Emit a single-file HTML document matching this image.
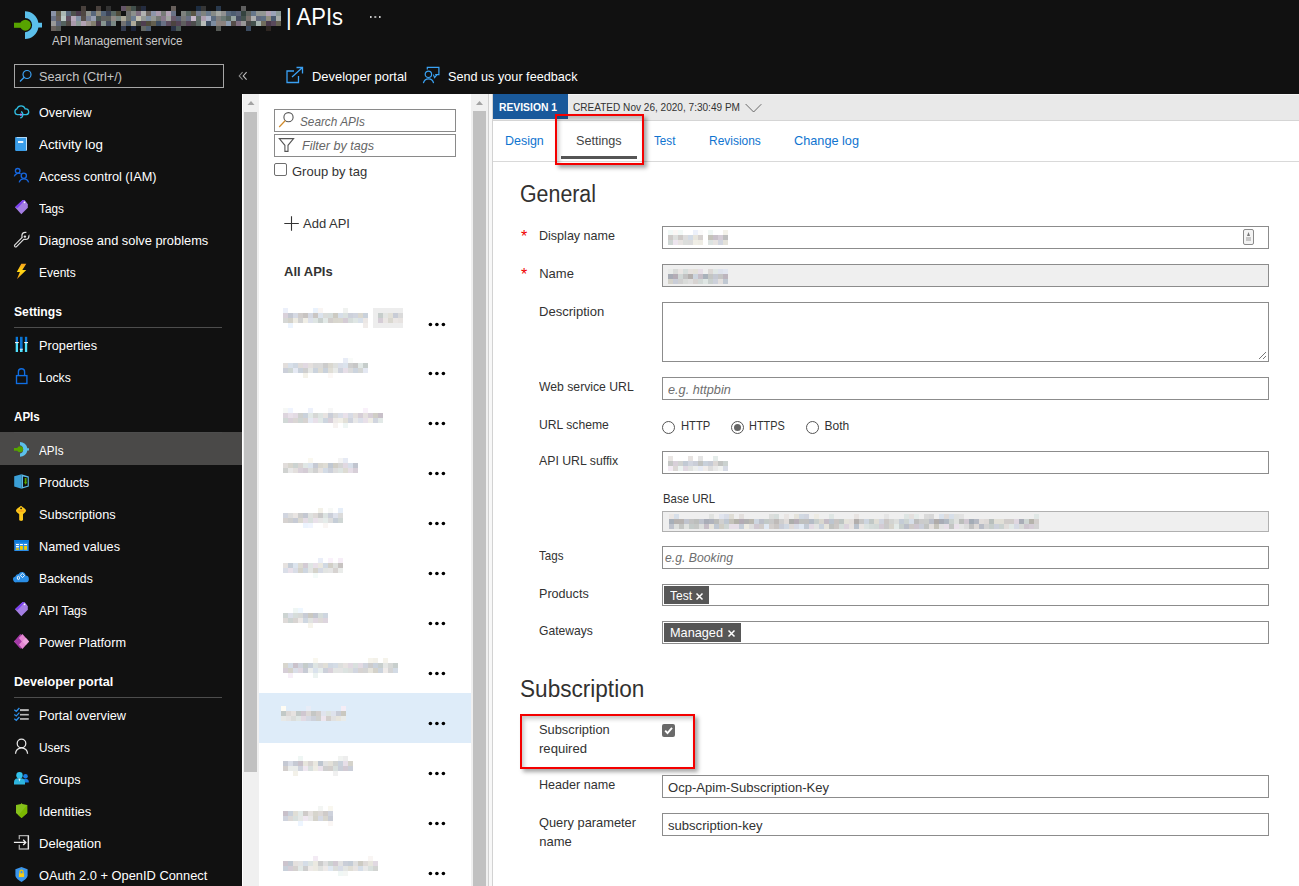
<!DOCTYPE html><html><head><meta charset="utf-8"><style>
html,body{margin:0;padding:0;}
body{width:1299px;height:886px;overflow:hidden;position:relative;background:#111111;font-family:"Liberation Sans", sans-serif;}
.t{position:absolute;white-space:nowrap;font-family:"Liberation Sans", sans-serif;}
svg{display:block;}
</style></head><body>
<svg style="position:absolute;left:10px;top:6px" width="40" height="40" viewBox="0 0 40 40">
<path d="M15 5.3 A13.7 13.7 0 0 1 28.4 16.7 H32 V21.6 H28.4 A13.7 13.7 0 0 1 15 33 V26.2 A7.1 7.1 0 0 0 15 11.9 Z" fill="#5bbfea"/>
<rect x="4" y="16.7" width="8" height="5.1" fill="#57a300"/>
<circle cx="15.4" cy="19.2" r="5.5" fill="#57a300"/>
</svg>
<svg style="position:absolute;left:51px;top:6px" width="230" height="25" viewBox="0 0 230 25"><rect x="30" y="0" width="5" height="5" fill="rgb(72, 64, 60)"/><rect x="45" y="0" width="5" height="5" fill="rgb(73, 65, 61)"/><rect x="55" y="0" width="5" height="5" fill="rgb(50, 50, 50)"/><rect x="70" y="0" width="5" height="5" fill="rgb(100, 84, 102)"/><rect x="75" y="0" width="5" height="5" fill="rgb(98, 94, 78)"/><rect x="80" y="0" width="5" height="5" fill="rgb(66, 80, 76)"/><rect x="85" y="0" width="5" height="5" fill="rgb(35, 35, 35)"/><rect x="90" y="0" width="5" height="5" fill="rgb(36, 44, 64)"/><rect x="120" y="0" width="5" height="5" fill="rgb(103, 95, 91)"/><rect x="145" y="0" width="5" height="5" fill="rgb(28, 44, 64)"/><rect x="150" y="0" width="5" height="5" fill="rgb(54, 54, 54)"/><rect x="165" y="0" width="5" height="5" fill="rgb(41, 57, 77)"/><rect x="190" y="0" width="5" height="5" fill="rgb(95, 95, 95)"/><rect x="0" y="5" width="5" height="5" fill="rgb(138, 146, 166)"/><rect x="5" y="5" width="5" height="5" fill="rgb(97, 93, 77)"/><rect x="10" y="5" width="5" height="5" fill="rgb(170, 184, 180)"/><rect x="15" y="5" width="5" height="5" fill="rgb(89, 105, 125)"/><rect x="20" y="5" width="5" height="5" fill="rgb(77, 81, 77)"/><rect x="25" y="5" width="5" height="5" fill="rgb(74, 58, 76)"/><rect x="30" y="5" width="5" height="5" fill="rgb(79, 71, 67)"/><rect x="35" y="5" width="5" height="5" fill="rgb(142, 146, 142)"/><rect x="40" y="5" width="5" height="5" fill="rgb(87, 103, 123)"/><rect x="45" y="5" width="5" height="5" fill="rgb(141, 137, 121)"/><rect x="50" y="5" width="5" height="5" fill="rgb(84, 100, 120)"/><rect x="55" y="5" width="5" height="5" fill="rgb(58, 66, 86)"/><rect x="60" y="5" width="5" height="5" fill="rgb(91, 105, 101)"/><rect x="65" y="5" width="5" height="5" fill="rgb(78, 74, 58)"/><rect x="75" y="5" width="5" height="5" fill="rgb(111, 111, 111)"/><rect x="80" y="5" width="5" height="5" fill="rgb(140, 144, 140)"/><rect x="85" y="5" width="5" height="5" fill="rgb(128, 112, 130)"/><rect x="90" y="5" width="5" height="5" fill="rgb(177, 177, 177)"/><rect x="95" y="5" width="5" height="5" fill="rgb(110, 102, 98)"/><rect x="100" y="5" width="5" height="5" fill="rgb(141, 149, 169)"/><rect x="105" y="5" width="5" height="5" fill="rgb(170, 154, 172)"/><rect x="110" y="5" width="5" height="5" fill="rgb(119, 123, 119)"/><rect x="115" y="5" width="5" height="5" fill="rgb(178, 162, 180)"/><rect x="120" y="5" width="5" height="5" fill="rgb(106, 114, 134)"/><rect x="130" y="5" width="5" height="5" fill="rgb(126, 130, 126)"/><rect x="135" y="5" width="5" height="5" fill="rgb(89, 103, 99)"/><rect x="140" y="5" width="5" height="5" fill="rgb(90, 86, 70)"/><rect x="145" y="5" width="5" height="5" fill="rgb(116, 124, 144)"/><rect x="150" y="5" width="5" height="5" fill="rgb(127, 131, 127)"/><rect x="155" y="5" width="5" height="5" fill="rgb(106, 122, 142)"/><rect x="160" y="5" width="5" height="5" fill="rgb(134, 138, 134)"/><rect x="165" y="5" width="5" height="5" fill="rgb(165, 169, 165)"/><rect x="170" y="5" width="5" height="5" fill="rgb(144, 144, 144)"/><rect x="175" y="5" width="5" height="5" fill="rgb(90, 106, 126)"/><rect x="180" y="5" width="5" height="5" fill="rgb(77, 93, 113)"/><rect x="185" y="5" width="5" height="5" fill="rgb(91, 99, 119)"/><rect x="190" y="5" width="5" height="5" fill="rgb(53, 67, 63)"/><rect x="195" y="5" width="5" height="5" fill="rgb(96, 100, 96)"/><rect x="200" y="5" width="5" height="5" fill="rgb(103, 119, 139)"/><rect x="205" y="5" width="5" height="5" fill="rgb(146, 150, 146)"/><rect x="210" y="5" width="5" height="5" fill="rgb(146, 150, 146)"/><rect x="215" y="5" width="5" height="5" fill="rgb(176, 160, 178)"/><rect x="220" y="5" width="5" height="5" fill="rgb(155, 163, 183)"/><rect x="225" y="5" width="5" height="5" fill="rgb(140, 154, 150)"/><rect x="0" y="10" width="5" height="5" fill="rgb(105, 113, 133)"/><rect x="5" y="10" width="5" height="5" fill="rgb(104, 96, 92)"/><rect x="10" y="10" width="5" height="5" fill="rgb(186, 200, 196)"/><rect x="15" y="10" width="5" height="5" fill="rgb(95, 79, 97)"/><rect x="20" y="10" width="5" height="5" fill="rgb(184, 168, 186)"/><rect x="25" y="10" width="5" height="5" fill="rgb(129, 145, 165)"/><rect x="30" y="10" width="5" height="5" fill="rgb(86, 78, 74)"/><rect x="35" y="10" width="5" height="5" fill="rgb(119, 127, 147)"/><rect x="40" y="10" width="5" height="5" fill="rgb(150, 158, 178)"/><rect x="45" y="10" width="5" height="5" fill="rgb(72, 86, 82)"/><rect x="50" y="10" width="5" height="5" fill="rgb(96, 96, 96)"/><rect x="55" y="10" width="5" height="5" fill="rgb(93, 97, 93)"/><rect x="60" y="10" width="5" height="5" fill="rgb(144, 136, 132)"/><rect x="65" y="10" width="5" height="5" fill="rgb(120, 134, 130)"/><rect x="70" y="10" width="5" height="5" fill="rgb(171, 167, 151)"/><rect x="75" y="10" width="5" height="5" fill="rgb(109, 113, 109)"/><rect x="80" y="10" width="5" height="5" fill="rgb(110, 126, 146)"/><rect x="85" y="10" width="5" height="5" fill="rgb(197, 193, 177)"/><rect x="90" y="10" width="5" height="5" fill="rgb(149, 153, 149)"/><rect x="95" y="10" width="5" height="5" fill="rgb(129, 145, 165)"/><rect x="100" y="10" width="5" height="5" fill="rgb(148, 152, 148)"/><rect x="105" y="10" width="5" height="5" fill="rgb(116, 120, 116)"/><rect x="110" y="10" width="5" height="5" fill="rgb(138, 122, 140)"/><rect x="115" y="10" width="5" height="5" fill="rgb(161, 165, 161)"/><rect x="120" y="10" width="5" height="5" fill="rgb(105, 89, 107)"/><rect x="125" y="10" width="5" height="5" fill="rgb(88, 96, 116)"/><rect x="130" y="10" width="5" height="5" fill="rgb(119, 119, 119)"/><rect x="135" y="10" width="5" height="5" fill="rgb(104, 112, 132)"/><rect x="140" y="10" width="5" height="5" fill="rgb(197, 181, 199)"/><rect x="145" y="10" width="5" height="5" fill="rgb(95, 109, 105)"/><rect x="150" y="10" width="5" height="5" fill="rgb(175, 159, 177)"/><rect x="155" y="10" width="5" height="5" fill="rgb(172, 180, 200)"/><rect x="160" y="10" width="5" height="5" fill="rgb(92, 108, 128)"/><rect x="165" y="10" width="5" height="5" fill="rgb(128, 128, 128)"/><rect x="170" y="10" width="5" height="5" fill="rgb(106, 120, 116)"/><rect x="175" y="10" width="5" height="5" fill="rgb(85, 99, 95)"/><rect x="180" y="10" width="5" height="5" fill="rgb(151, 165, 161)"/><rect x="185" y="10" width="5" height="5" fill="rgb(68, 76, 96)"/><rect x="190" y="10" width="5" height="5" fill="rgb(68, 82, 78)"/><rect x="195" y="10" width="5" height="5" fill="rgb(118, 110, 106)"/><rect x="200" y="10" width="5" height="5" fill="rgb(175, 175, 175)"/><rect x="205" y="10" width="5" height="5" fill="rgb(97, 105, 125)"/><rect x="210" y="10" width="5" height="5" fill="rgb(95, 111, 131)"/><rect x="215" y="10" width="5" height="5" fill="rgb(147, 143, 127)"/><rect x="220" y="10" width="5" height="5" fill="rgb(75, 91, 111)"/><rect x="225" y="10" width="5" height="5" fill="rgb(169, 173, 169)"/><rect x="0" y="15" width="5" height="5" fill="rgb(153, 153, 153)"/><rect x="5" y="15" width="5" height="5" fill="rgb(94, 102, 122)"/><rect x="10" y="15" width="5" height="5" fill="rgb(84, 98, 94)"/><rect x="15" y="15" width="5" height="5" fill="rgb(81, 73, 69)"/><rect x="20" y="15" width="5" height="5" fill="rgb(169, 153, 171)"/><rect x="25" y="15" width="5" height="5" fill="rgb(140, 154, 150)"/><rect x="30" y="15" width="5" height="5" fill="rgb(177, 161, 179)"/><rect x="35" y="15" width="5" height="5" fill="rgb(155, 147, 143)"/><rect x="40" y="15" width="5" height="5" fill="rgb(131, 127, 111)"/><rect x="45" y="15" width="5" height="5" fill="rgb(70, 54, 72)"/><rect x="50" y="15" width="5" height="5" fill="rgb(134, 148, 144)"/><rect x="55" y="15" width="5" height="5" fill="rgb(66, 74, 94)"/><rect x="60" y="15" width="5" height="5" fill="rgb(122, 136, 132)"/><rect x="70" y="15" width="5" height="5" fill="rgb(114, 114, 114)"/><rect x="75" y="15" width="5" height="5" fill="rgb(73, 89, 109)"/><rect x="80" y="15" width="5" height="5" fill="rgb(173, 169, 153)"/><rect x="85" y="15" width="5" height="5" fill="rgb(67, 71, 67)"/><rect x="90" y="15" width="5" height="5" fill="rgb(78, 62, 80)"/><rect x="95" y="15" width="5" height="5" fill="rgb(78, 74, 58)"/><rect x="100" y="15" width="5" height="5" fill="rgb(100, 96, 80)"/><rect x="105" y="15" width="5" height="5" fill="rgb(61, 77, 97)"/><rect x="110" y="15" width="5" height="5" fill="rgb(104, 112, 132)"/><rect x="115" y="15" width="5" height="5" fill="rgb(93, 77, 95)"/><rect x="120" y="15" width="5" height="5" fill="rgb(76, 68, 64)"/><rect x="125" y="15" width="5" height="5" fill="rgb(83, 67, 85)"/><rect x="130" y="15" width="5" height="5" fill="rgb(95, 95, 95)"/><rect x="135" y="15" width="5" height="5" fill="rgb(85, 69, 87)"/><rect x="140" y="15" width="5" height="5" fill="rgb(77, 77, 77)"/><rect x="145" y="15" width="5" height="5" fill="rgb(92, 106, 102)"/><rect x="150" y="15" width="5" height="5" fill="rgb(184, 188, 184)"/><rect x="155" y="15" width="5" height="5" fill="rgb(61, 77, 97)"/><rect x="160" y="15" width="5" height="5" fill="rgb(124, 140, 160)"/><rect x="165" y="15" width="5" height="5" fill="rgb(139, 131, 127)"/><rect x="170" y="15" width="5" height="5" fill="rgb(138, 130, 126)"/><rect x="175" y="15" width="5" height="5" fill="rgb(140, 156, 176)"/><rect x="180" y="15" width="5" height="5" fill="rgb(85, 77, 73)"/><rect x="185" y="15" width="5" height="5" fill="rgb(128, 112, 130)"/><rect x="190" y="15" width="5" height="5" fill="rgb(151, 151, 151)"/><rect x="195" y="15" width="5" height="5" fill="rgb(70, 70, 70)"/><rect x="200" y="15" width="5" height="5" fill="rgb(67, 81, 77)"/><rect x="205" y="15" width="5" height="5" fill="rgb(164, 178, 174)"/><rect x="210" y="15" width="5" height="5" fill="rgb(113, 109, 93)"/><rect x="215" y="15" width="5" height="5" fill="rgb(73, 57, 75)"/><rect x="220" y="15" width="5" height="5" fill="rgb(89, 73, 91)"/><rect x="225" y="15" width="5" height="5" fill="rgb(100, 96, 80)"/><rect x="0" y="20" width="5" height="5" fill="rgb(105, 97, 93)"/><rect x="5" y="20" width="5" height="5" fill="rgb(87, 91, 87)"/><rect x="70" y="20" width="5" height="5" fill="rgb(50, 58, 78)"/><rect x="80" y="20" width="5" height="5" fill="rgb(27, 35, 55)"/><rect x="90" y="20" width="5" height="5" fill="rgb(100, 104, 100)"/><rect x="95" y="20" width="5" height="5" fill="rgb(79, 95, 115)"/><rect x="120" y="20" width="5" height="5" fill="rgb(42, 50, 70)"/><rect x="125" y="20" width="5" height="5" fill="rgb(76, 90, 86)"/><rect x="165" y="20" width="5" height="5" fill="rgb(86, 90, 86)"/><rect x="195" y="20" width="5" height="5" fill="rgb(60, 76, 96)"/><rect x="215" y="20" width="5" height="5" fill="rgb(46, 38, 34)"/></svg>
<div class="t" style="left:286px;top:1px;font-size:24.5px;line-height:31px;color:#ffffff;font-weight:400;font-style:normal;transform:scaleX(0.8968);transform-origin:0 0;">| APIs</div>
<svg style="position:absolute;left:368px;top:14px" width="14" height="6" viewBox="0 0 14 6"><g fill="#cfcfcf"><rect x="2" y="2" width="1.6" height="2"/><rect x="6.3" y="2" width="2" height="2" fill="#a8a8a8"/><rect x="11" y="2" width="1.6" height="2"/></g></svg>
<div class="t" style="left:52px;top:34px;font-size:12px;line-height:15px;color:#c8c8c8;font-weight:400;font-style:normal;transform:scaleX(0.9734);transform-origin:0 0;">API Management service</div>
<div style="position:absolute;left:14px;top:64px;width:208px;height:22px;border:1px solid #a6a6a6;"></div>
<svg style="position:absolute;left:18px;top:68px" width="16" height="16" viewBox="0 0 16 16"><circle cx="9" cy="6.5" r="4" fill="none" stroke="#3aa0f3" stroke-width="1.2"/><path d="M6.2 9.3 L2 13.5" stroke="#3aa0f3" stroke-width="1.3"/></svg>
<div class="t" style="left:39px;top:69px;font-size:13px;line-height:16px;color:#c4c4c4;font-weight:400;font-style:normal;transform:scaleX(0.9777);transform-origin:0 0;">Search (Ctrl+/)</div>
<svg style="position:absolute;left:236px;top:68px" width="14" height="16" viewBox="0 0 14 16"><path d="M6.6 4.1 L3.2 7.9 L6.6 11.7" fill="none" stroke="#8a8a8a" stroke-width="1.1"/><path d="M10.6 4.1 L7.2 7.9 L10.6 11.7" fill="none" stroke="#c0c0c0" stroke-width="1.1"/></svg>
<svg style="position:absolute;left:284px;top:64px" width="22" height="22" viewBox="0 0 22 22"><path d="M10 7 H3 V18.5 H14.5 V12" fill="none" stroke="#3aa0f3" stroke-width="1.3"/><path d="M8 13 L18.5 3.5 M12.5 3.5 H18.5 V9.5" fill="none" stroke="#3aa0f3" stroke-width="1.3"/></svg>
<div class="t" style="left:311.5px;top:69px;font-size:13px;line-height:16px;color:#ffffff;font-weight:400;font-style:normal;transform:scaleX(0.9959);transform-origin:0 0;">Developer portal</div>
<svg style="position:absolute;left:420px;top:64px" width="22" height="22" viewBox="0 0 22 22"><g fill="none" stroke="#3aa3f5" stroke-width="1.2"><circle cx="8.4" cy="10.3" r="3.2"/><path d="M3.4 19.2 A5.2 5.4 0 0 1 13.6 19.2"/><path d="M7.3 5.6 V3.4 H18.9 V10.6 H15.2"/><path d="M13.4 10.6 L14.6 13.6 L16.8 10.9"/></g></svg>
<div class="t" style="left:447.5px;top:69px;font-size:13px;line-height:16px;color:#ffffff;font-weight:400;font-style:normal;transform:scaleX(0.9738);transform-origin:0 0;">Send us your feedback</div>
<div style="position:absolute;left:0px;top:432px;width:242px;height:33px;background:#4a4948;"></div>
<div class="t" style="left:14px;top:304px;font-size:13px;line-height:16px;color:#ffffff;font-weight:700;font-style:normal;transform:scaleX(0.9357);transform-origin:0 0;">Settings</div>
<div style="position:absolute;left:14px;top:327px;width:208px;height:1px;background:#4d4d4d;"></div>
<div class="t" style="left:14px;top:409px;font-size:13px;line-height:16px;color:#ffffff;font-weight:700;font-style:normal;transform:scaleX(0.8925);transform-origin:0 0;">APIs</div>
<div style="position:absolute;left:14px;top:432px;width:208px;height:1px;background:#4d4d4d;"></div>
<div class="t" style="left:14px;top:674px;font-size:13px;line-height:16px;color:#ffffff;font-weight:700;font-style:normal;transform:scaleX(0.9679);transform-origin:0 0;">Developer portal</div>
<div style="position:absolute;left:14px;top:697px;width:208px;height:1px;background:#4d4d4d;"></div>
<div class="t" style="left:39px;top:105px;font-size:13px;line-height:16px;color:#ffffff;font-weight:400;font-style:normal;transform:scaleX(0.9725);transform-origin:0 0;">Overview</div>
<div class="t" style="left:39px;top:137px;font-size:13px;line-height:16px;color:#ffffff;font-weight:400;font-style:normal;transform:scaleX(1.0283);transform-origin:0 0;">Activity log</div>
<div class="t" style="left:39px;top:169px;font-size:13px;line-height:16px;color:#ffffff;font-weight:400;font-style:normal;transform:scaleX(0.9798);transform-origin:0 0;">Access control (IAM)</div>
<div class="t" style="left:39px;top:201px;font-size:13px;line-height:16px;color:#ffffff;font-weight:400;font-style:normal;transform:scaleX(0.9065);transform-origin:0 0;">Tags</div>
<div class="t" style="left:39px;top:233px;font-size:13px;line-height:16px;color:#ffffff;font-weight:400;font-style:normal;transform:scaleX(0.9884);transform-origin:0 0;">Diagnose and solve problems</div>
<div class="t" style="left:39px;top:265px;font-size:13px;line-height:16px;color:#ffffff;font-weight:400;font-style:normal;transform:scaleX(0.9233);transform-origin:0 0;">Events</div>
<div class="t" style="left:39px;top:338px;font-size:13px;line-height:16px;color:#ffffff;font-weight:400;font-style:normal;transform:scaleX(0.9789);transform-origin:0 0;">Properties</div>
<div class="t" style="left:39px;top:370px;font-size:13px;line-height:16px;color:#ffffff;font-weight:400;font-style:normal;transform:scaleX(0.9362);transform-origin:0 0;">Locks</div>
<div class="t" style="left:39px;top:443px;font-size:13px;line-height:16px;color:#ffffff;font-weight:400;font-style:normal;transform:scaleX(0.8956);transform-origin:0 0;">APIs</div>
<div class="t" style="left:39px;top:475px;font-size:13px;line-height:16px;color:#ffffff;font-weight:400;font-style:normal;transform:scaleX(0.9744);transform-origin:0 0;">Products</div>
<div class="t" style="left:39px;top:507px;font-size:13px;line-height:16px;color:#ffffff;font-weight:400;font-style:normal;transform:scaleX(0.9827);transform-origin:0 0;">Subscriptions</div>
<div class="t" style="left:39px;top:539px;font-size:13px;line-height:16px;color:#ffffff;font-weight:400;font-style:normal;transform:scaleX(0.9746);transform-origin:0 0;">Named values</div>
<div class="t" style="left:39px;top:571px;font-size:13px;line-height:16px;color:#ffffff;font-weight:400;font-style:normal;transform:scaleX(0.9423);transform-origin:0 0;">Backends</div>
<div class="t" style="left:39px;top:603px;font-size:13px;line-height:16px;color:#ffffff;font-weight:400;font-style:normal;transform:scaleX(0.9228);transform-origin:0 0;">API Tags</div>
<div class="t" style="left:39px;top:635px;font-size:13px;line-height:16px;color:#ffffff;font-weight:400;font-style:normal;transform:scaleX(0.9789);transform-origin:0 0;">Power Platform</div>
<div class="t" style="left:39px;top:708px;font-size:13px;line-height:16px;color:#ffffff;font-weight:400;font-style:normal;transform:scaleX(0.9789);transform-origin:0 0;">Portal overview</div>
<div class="t" style="left:39px;top:740px;font-size:13px;line-height:16px;color:#ffffff;font-weight:400;font-style:normal;transform:scaleX(0.9130);transform-origin:0 0;">Users</div>
<div class="t" style="left:39px;top:772px;font-size:13px;line-height:16px;color:#ffffff;font-weight:400;font-style:normal;transform:scaleX(0.9733);transform-origin:0 0;">Groups</div>
<div class="t" style="left:39px;top:804px;font-size:13px;line-height:16px;color:#ffffff;font-weight:400;font-style:normal;transform:scaleX(1.0068);transform-origin:0 0;">Identities</div>
<div class="t" style="left:39px;top:836px;font-size:13px;line-height:16px;color:#ffffff;font-weight:400;font-style:normal;transform:scaleX(1.0007);transform-origin:0 0;">Delegation</div>
<div class="t" style="left:39px;top:868px;font-size:13px;line-height:16px;color:#ffffff;font-weight:400;font-style:normal;transform:scaleX(0.9889);transform-origin:0 0;">OAuth 2.0 + OpenID Connect</div>
<svg style="position:absolute;left:10px;top:102px" width="24" height="24" viewBox="0 0 24 24"><path d="M7.6 12.7 A3 3 0 0 1 6.9 6.9 A4.4 4.4 0 0 1 15.2 6.9 A2.9 2.9 0 0 1 16.3 12.7 Z" fill="none" stroke="#2fbce0" stroke-width="1.3"/><path d="M11 9.6 C13.6 10.6 13.4 15.4 10.2 15.9" fill="none" stroke="#2fbce0" stroke-width="1.3"/><circle cx="10.9" cy="12.6" r="1.2" fill="#b57cf0"/></svg>
<svg style="position:absolute;left:10px;top:134px" width="24" height="24" viewBox="0 0 24 24"><rect x="5.1" y="2.9" width="11.6" height="14" rx="0.8" fill="#3a9de8"/><rect x="16" y="3.2" width="0.9" height="13.3" fill="#d8ecfb"/><rect x="6.8" y="3" width="9.6" height="0.9" fill="#bfe0fa"/><rect x="8" y="7.1" width="5.3" height="1.8" fill="#ffffff"/></svg>
<svg style="position:absolute;left:10px;top:166px" width="24" height="24" viewBox="0 0 24 24"><g fill="none" stroke="#1766dc" stroke-width="1.35"><circle cx="7.7" cy="4.8" r="2.3"/><path d="M4.3 10.4 A4.6 4.6 0 0 1 10.6 7.6"/><circle cx="13.8" cy="9.7" r="2.6"/><path d="M9.2 16.4 A4.9 4.9 0 0 1 18.6 16.4"/></g></svg>
<svg style="position:absolute;left:10px;top:198px" width="24" height="24" viewBox="0 0 24 24"><polygon points="5,9.3 12.4,2.2 14.8,2.2 17.8,6.2 17.8,9.8 11.3,16.3" fill="#a47ee3"/><polygon points="5,9.3 12.4,2.2 14.8,2.2 7.6,10.1" fill="#7b3ff2"/><circle cx="14.5" cy="4.4" r="0.8" fill="#fff"/></svg>
<svg style="position:absolute;left:10px;top:230px" width="24" height="24" viewBox="0 0 24 24"><g stroke-linecap="round"><line x1="13.6" y1="7.8" x2="5.7" y2="15.7" stroke="#e4e4e4" stroke-width="3.5"/><circle cx="15.4" cy="5.9" r="4.1" fill="#e4e4e4"/><line x1="13.6" y1="7.8" x2="5.7" y2="15.7" stroke="#111" stroke-width="1.3"/><circle cx="15.4" cy="5.9" r="2.9" fill="#111"/><path d="M13.9 4.9 L17.6 1.2 L20.1 3.7 L16.4 7.4 Z" fill="#111"/><circle cx="14.9" cy="6.6" r="1.2" fill="#e4e4e4"/></g></svg>
<svg style="position:absolute;left:10px;top:262px" width="24" height="24" viewBox="0 0 24 24"><defs><linearGradient id="lg1" x1="0" y1="0" x2="0" y2="1"><stop offset="0" stop-color="#f6a01a"/><stop offset="0.5" stop-color="#ffd814"/><stop offset="1" stop-color="#f59a1b"/></linearGradient></defs><polygon points="11.3,1.8 16.3,1.8 12.3,7.9 16.3,7.9 7,16.9 9.9,10.1 6.8,10.1" fill="url(#lg1)"/></svg>
<svg style="position:absolute;left:10px;top:333px" width="24" height="24" viewBox="0 0 24 24"><rect x="5.7" y="3.8" width="2.3" height="5.7" fill="#0b78d9"/><rect x="5.7" y="9.5" width="2.3" height="9.5" fill="#50e0fd"/><rect x="10" y="3.8" width="2.6" height="12.2" fill="#0b72cf"/><rect x="10" y="16" width="2.6" height="3" fill="#50e0fd"/><rect x="14.9" y="3.8" width="2.3" height="5.7" fill="#0b78d9"/><rect x="14.9" y="9.5" width="2.3" height="9.5" fill="#50e0fd"/><rect x="5" y="9" width="3.8" height="1.1" fill="#eee"/><rect x="14.2" y="9" width="3.8" height="1.1" fill="#eee"/><rect x="9.8" y="15.7" width="3" height="1.1" fill="#dde"/></svg>
<svg style="position:absolute;left:10px;top:365px" width="24" height="24" viewBox="0 0 24 24"><g fill="none" stroke="#106ee3" stroke-width="1.35"><path d="M8.4 10.6 V6.8 A3.1 3.1 0 0 1 14.6 6.8 V10.6"/><rect x="6.5" y="10.6" width="10.4" height="7.9"/></g></svg>
<svg style="position:absolute;left:10px;top:438px" width="24" height="24" viewBox="0 0 24 24"><path d="M10 4.1 A7.5 7.5 0 0 1 17.4 10.3 H19 V12.5 H17.4 A7.5 7.5 0 0 1 10 18.8 V15.6 A4.3 4.3 0 0 0 10 7.3 Z" fill="#5bc0eb"/><rect x="4" y="10" width="4" height="2.7" fill="#57a300"/><circle cx="10.1" cy="11.3" r="3" fill="#57a300"/></svg>
<svg style="position:absolute;left:10px;top:470px" width="24" height="24" viewBox="0 0 24 24"><polygon points="4.2,6.2 11.5,4.2 11.5,18.7 4.2,16.4" fill="#3b9fd6"/><polygon points="11.5,4.2 18.8,6.4 18.8,16.5 11.5,18.7" fill="#5ab8e6"/><polygon points="13,6.6 17.7,7.6 17.7,15.8 13,16.9" fill="#0e0e0e"/><rect x="14.7" y="8" width="1.8" height="5" fill="#57a300"/><polygon points="14,12.2 17.2,12.2 15.6,14.8" fill="#57a300"/></svg>
<svg style="position:absolute;left:10px;top:502px" width="24" height="24" viewBox="0 0 24 24"><path d="M11 3.8 C12.6 5 16 7 16 8.7 C16 10.2 13.6 11.4 13 12.2 V18.3 L11.1 19.1 L9.2 18.3 V12.2 C8.6 11.4 6 10.2 6 8.7 C6 7 9.4 5 11 3.8 Z" fill="#fcc81a"/><ellipse cx="11" cy="8.9" rx="3.2" ry="1.1" fill="#f6a81a"/><circle cx="11.1" cy="6.3" r="0.9" fill="#111"/></svg>
<svg style="position:absolute;left:10px;top:534px" width="24" height="24" viewBox="0 0 24 24"><rect x="4.3" y="6" width="14.4" height="11" fill="#2b8de6"/><rect x="4.3" y="6" width="14.4" height="2.6" fill="#0a78d8"/><g fill="#ffffff"><rect x="6" y="10" width="2.9" height="1.1"/><rect x="10" y="10" width="2.9" height="1.1"/><rect x="14.1" y="10" width="2.9" height="1.1"/><rect x="6" y="12" width="2.9" height="1.4"/></g><g fill="#f2cc00"><rect x="10" y="12" width="2.9" height="3.8"/><rect x="14.1" y="12" width="2.9" height="3.8"/><rect x="6" y="14.2" width="2.9" height="1.6"/></g></svg>
<svg style="position:absolute;left:10px;top:566px" width="24" height="24" viewBox="0 0 24 24"><path d="M6.6 16.3 A2.9 2.9 0 0 1 5.3 10.6 A3.3 3.3 0 0 1 8.6 8 A3.7 3.7 0 0 1 15.6 9.6 A3.4 3.4 0 0 1 16.3 16.3 Z" fill="#2a8ee6"/><ellipse cx="8.4" cy="11.9" rx="1.1" ry="1.7" fill="none" stroke="#fff" stroke-width="0.9"/><path d="M12.5 7.4 L14.6 9.4 L12.5 11.6 L10.3 9.4 Z" fill="none" stroke="#fff" stroke-width="0.9"/></svg>
<svg style="position:absolute;left:10px;top:598px" width="24" height="24" viewBox="0 0 24 24"><g transform="translate(0,2)"><polygon points="5,9.3 12.4,2.2 14.8,2.2 17.8,6.2 17.8,9.8 11.3,16.3" fill="#a47ee3"/><polygon points="5,9.3 12.4,2.2 14.8,2.2 7.6,10.1" fill="#7b3ff2"/><circle cx="14.5" cy="4.4" r="0.8" fill="#fff"/></g></svg>
<svg style="position:absolute;left:10px;top:630px" width="24" height="24" viewBox="0 0 24 24"><polygon points="4,11.4 12.4,3.9 19.1,11.4 12.4,18.9" fill="#e486d2"/><polygon points="12.3,11.4 15.7,7.7 19.1,11.4 15.7,15.1" fill="#eba5dc"/><polygon points="4,11.4 10.3,4.1 11.5,5.2 8.9,8.0 11.8,11.4 8.9,14.8 11.5,17.6 10.3,18.7" fill="#a43aa6"/></svg>
<svg style="position:absolute;left:10px;top:703px" width="24" height="24" viewBox="0 0 24 24"><g fill="none" stroke="#2d8ee8" stroke-width="1.3"><path d="M4.3 6.8 L6.3 8.3 L9.4 5"/><path d="M4.3 11.4 L6.3 12.9 L9.4 9.6"/><path d="M4.3 15.8 L6.3 17.3 L9.4 14"/></g><g fill="#b8b8b8"><rect x="10" y="6.1" width="8.8" height="2"/><rect x="10" y="10.9" width="8.8" height="1.6"/><rect x="10" y="15.1" width="8.8" height="1.7"/></g></svg>
<svg style="position:absolute;left:10px;top:735px" width="24" height="24" viewBox="0 0 24 24"><g fill="none" stroke="#e8e8e8" stroke-width="1.25"><circle cx="11.5" cy="8.4" r="4.3"/><path d="M5.5 18.8 A6 6 0 0 1 17.6 18.8"/></g></svg>
<svg style="position:absolute;left:10px;top:767px" width="24" height="24" viewBox="0 0 24 24"><circle cx="15.5" cy="9.2" r="2.3" fill="#1b7ee2"/><path d="M12.5 15.5 V14.5 A3 3 0 0 1 15.5 11.8 A3.2 3.2 0 0 1 18.8 14.5 V15.5 Z" fill="#1b7ee2"/><circle cx="9.5" cy="8.2" r="3.2" fill="#33c4ed"/><path d="M4 17.5 V15.2 A3.8 3.8 0 0 1 9.5 11.6 A3.8 3.8 0 0 1 15 15.2 V17.5 Z" fill="#2eb5de"/><path d="M8.3 11.6 L9.5 14.8 L10.7 11.6 Z" fill="#d8f4ff"/></svg>
<svg style="position:absolute;left:10px;top:799px" width="24" height="24" viewBox="0 0 24 24"><path d="M11.6 4 L12.3 5 L17.2 6.1 V14.1 L11.6 18.9 L6 14.1 V6.1 L10.9 5 Z" fill="#86c11b"/><path d="M17.2 6.1 V14.1 L11.6 18.9 L8.5 16.2 L17 6.1 Z" fill="#7ab800"/></svg>
<svg style="position:absolute;left:10px;top:831px" width="24" height="24" viewBox="0 0 24 24"><path d="M9.3 8.3 V4.7 H18.4 V18 H9.3 V13.8" fill="none" stroke="#a8a8a8" stroke-width="1.3"/><path d="M18.4 4.7 V18" stroke="#e8e8e8" stroke-width="1.3"/><path d="M3.9 11.4 H15.3 M13.2 8.8 L15.8 11.4 L13.2 14" fill="none" stroke="#f0f0f0" stroke-width="1.3"/></svg>
<svg style="position:absolute;left:10px;top:862px" width="24" height="24" viewBox="0 0 24 24"><path d="M11.5 5.1 L17.6 7.2 V13.3 C17.6 15.8 14.5 18.6 11.5 19.9 C8.5 18.6 5.4 15.8 5.4 13.3 V7.2 Z" fill="#3a95ec"/><path d="M9.9 11.5 V9.8 A1.6 1.6 0 0 1 13.1 9.8 V11.5" fill="none" stroke="#f5c400" stroke-width="1.2"/><rect x="8.9" y="11.3" width="5.2" height="3.8" fill="#f8cc16"/></svg>
<div style="position:absolute;left:242px;top:94px;width:1px;height:792px;background:#ffffff;"></div>
<div style="position:absolute;left:243px;top:94px;width:16px;height:792px;background:#f0f0f0;"></div>
<svg style="position:absolute;left:243px;top:94px" width="16" height="17" viewBox="0 0 16 17"><polygon points="4.5,11 8,7 11.5,11" fill="#a3a3a3"/></svg>
<div style="position:absolute;left:244px;top:112px;width:13px;height:660px;background:#c1c1c1;"></div>
<div style="position:absolute;left:259px;top:94px;width:212px;height:792px;background:#ffffff;"></div>
<div style="position:absolute;left:274px;top:109px;width:180px;height:21px;border:1px solid #8a8a8a;background:#fff;"></div>
<svg style="position:absolute;left:277px;top:111px" width="20" height="20" viewBox="0 0 20 20"><circle cx="11.5" cy="6.2" r="4.6" fill="none" stroke="#555" stroke-width="1.1"/><path d="M8.3 9.5 L2.2 16" stroke="#d08a2a" stroke-width="1.2"/></svg>
<div class="t" style="left:300px;top:114px;font-size:13px;line-height:16px;color:#666666;font-weight:400;font-style:italic;transform:scaleX(0.9055);transform-origin:0 0;">Search APIs</div>
<div style="position:absolute;left:274px;top:134px;width:180px;height:21px;border:1px solid #8a8a8a;background:#fff;"></div>
<svg style="position:absolute;left:277px;top:136px" width="20" height="20" viewBox="0 0 20 20"><path d="M2.3 2.6 H16.6 L11 9.3 V15.4 H7.9 V9.3 Z" fill="none" stroke="#555" stroke-width="1.1"/></svg>
<div class="t" style="left:302px;top:138px;font-size:13px;line-height:16px;color:#666666;font-weight:400;font-style:italic;transform:scaleX(0.9675);transform-origin:0 0;">Filter by tags</div>
<div style="position:absolute;left:274px;top:163px;width:11px;height:11px;border:1px solid #6e6e6e;border-radius:2px;background:#fff;"></div>
<div class="t" style="left:292px;top:164px;font-size:13px;line-height:16px;color:#333333;font-weight:400;font-style:normal;">Group by tag</div>
<svg style="position:absolute;left:283px;top:215px" width="17" height="17" viewBox="0 0 17 17"><path d="M8.5 1.3 V15.8 M1.3 8.5 H15.8" stroke="#333" stroke-width="1.1"/></svg>
<div class="t" style="left:303px;top:216px;font-size:13px;line-height:16px;color:#333333;font-weight:400;font-style:normal;">Add API</div>
<div class="t" style="left:284px;top:264px;font-size:13px;line-height:16px;color:#333333;font-weight:700;font-style:normal;">All APIs</div>
<div style="position:absolute;left:259px;top:693px;width:212px;height:50px;background:#deecf9;"></div>
<div style="position:absolute;left:373px;top:308px;width:30px;height:20px;background:#ededed;"></div>
<svg style="position:absolute;left:378px;top:313px" width="25" height="10" viewBox="0 0 25 10"><rect x="0" y="0" width="5" height="5" fill="rgb(198, 205, 203)"/><rect x="5" y="0" width="5" height="5" fill="rgb(227, 229, 227)"/><rect x="10" y="0" width="5" height="5" fill="rgb(226, 224, 216)"/><rect x="15" y="0" width="5" height="5" fill="rgb(200, 204, 214)"/><rect x="20" y="0" width="5" height="5" fill="rgb(218, 218, 218)"/><rect x="0" y="5" width="5" height="5" fill="rgb(213, 205, 214)"/><rect x="5" y="5" width="5" height="5" fill="rgb(234, 230, 228)"/><rect x="10" y="5" width="5" height="5" fill="rgb(218, 216, 208)"/><rect x="15" y="5" width="5" height="5" fill="rgb(234, 230, 228)"/><rect x="20" y="5" width="5" height="5" fill="rgb(231, 227, 225)"/></svg>
<svg style="position:absolute;left:283px;top:308px" width="85" height="20" viewBox="0 0 85 20"><rect x="0" y="0" width="5" height="5" fill="rgb(236, 240, 250)"/><rect x="30" y="0" width="5" height="5" fill="rgb(234, 242, 252)"/><rect x="35" y="0" width="5" height="5" fill="rgb(249, 245, 243)"/><rect x="60" y="0" width="5" height="5" fill="rgb(240, 242, 240)"/><rect x="0" y="5" width="5" height="5" fill="rgb(217, 209, 218)"/><rect x="5" y="5" width="5" height="5" fill="rgb(196, 200, 210)"/><rect x="10" y="5" width="5" height="5" fill="rgb(214, 218, 228)"/><rect x="15" y="5" width="5" height="5" fill="rgb(209, 205, 203)"/><rect x="20" y="5" width="5" height="5" fill="rgb(200, 196, 194)"/><rect x="25" y="5" width="5" height="5" fill="rgb(213, 217, 227)"/><rect x="30" y="5" width="5" height="5" fill="rgb(202, 198, 196)"/><rect x="35" y="5" width="5" height="5" fill="rgb(219, 227, 237)"/><rect x="40" y="5" width="5" height="5" fill="rgb(218, 220, 218)"/><rect x="45" y="5" width="5" height="5" fill="rgb(214, 221, 219)"/><rect x="50" y="5" width="5" height="5" fill="rgb(204, 202, 194)"/><rect x="55" y="5" width="5" height="5" fill="rgb(214, 222, 232)"/><rect x="60" y="5" width="5" height="5" fill="rgb(218, 225, 223)"/><rect x="65" y="5" width="5" height="5" fill="rgb(205, 209, 219)"/><rect x="70" y="5" width="5" height="5" fill="rgb(209, 213, 223)"/><rect x="75" y="5" width="5" height="5" fill="rgb(218, 216, 208)"/><rect x="80" y="5" width="5" height="5" fill="rgb(201, 209, 219)"/><rect x="0" y="10" width="5" height="5" fill="rgb(213, 215, 213)"/><rect x="5" y="10" width="5" height="5" fill="rgb(211, 209, 201)"/><rect x="10" y="10" width="5" height="5" fill="rgb(237, 235, 227)"/><rect x="15" y="10" width="5" height="5" fill="rgb(211, 211, 211)"/><rect x="20" y="10" width="5" height="5" fill="rgb(240, 238, 230)"/><rect x="25" y="10" width="5" height="5" fill="rgb(221, 225, 235)"/><rect x="30" y="10" width="5" height="5" fill="rgb(222, 229, 227)"/><rect x="35" y="10" width="5" height="5" fill="rgb(202, 209, 207)"/><rect x="40" y="10" width="5" height="5" fill="rgb(226, 233, 231)"/><rect x="45" y="10" width="5" height="5" fill="rgb(210, 206, 204)"/><rect x="50" y="10" width="5" height="5" fill="rgb(216, 214, 206)"/><rect x="55" y="10" width="5" height="5" fill="rgb(217, 215, 207)"/><rect x="60" y="10" width="5" height="5" fill="rgb(212, 204, 213)"/><rect x="65" y="10" width="5" height="5" fill="rgb(214, 221, 219)"/><rect x="70" y="10" width="5" height="5" fill="rgb(223, 230, 228)"/><rect x="75" y="10" width="5" height="5" fill="rgb(216, 224, 234)"/><rect x="80" y="10" width="5" height="5" fill="rgb(235, 231, 229)"/><rect x="5" y="15" width="5" height="5" fill="rgb(236, 244, 254)"/><rect x="80" y="15" width="5" height="5" fill="rgb(240, 236, 234)"/></svg>
<svg style="position:absolute;left:425px;top:319.5px" width="24" height="9" viewBox="0 0 24 9"><g fill="#000"><circle cx="5.4" cy="4.5" r="1.8"/><circle cx="11.9" cy="4.5" r="1.8"/><circle cx="18.4" cy="4.5" r="1.8"/></g></svg>
<svg style="position:absolute;left:283px;top:358px" width="85" height="20" viewBox="0 0 85 20"><rect x="60" y="0" width="5" height="5" fill="rgb(232, 236, 246)"/><rect x="65" y="0" width="5" height="5" fill="rgb(249, 251, 249)"/><rect x="0" y="5" width="5" height="5" fill="rgb(226, 222, 220)"/><rect x="5" y="5" width="5" height="5" fill="rgb(216, 224, 234)"/><rect x="10" y="5" width="5" height="5" fill="rgb(208, 216, 226)"/><rect x="15" y="5" width="5" height="5" fill="rgb(223, 219, 217)"/><rect x="20" y="5" width="5" height="5" fill="rgb(225, 217, 226)"/><rect x="25" y="5" width="5" height="5" fill="rgb(228, 224, 222)"/><rect x="30" y="5" width="5" height="5" fill="rgb(217, 217, 217)"/><rect x="35" y="5" width="5" height="5" fill="rgb(218, 218, 218)"/><rect x="40" y="5" width="5" height="5" fill="rgb(204, 204, 204)"/><rect x="45" y="5" width="5" height="5" fill="rgb(218, 216, 208)"/><rect x="50" y="5" width="5" height="5" fill="rgb(222, 224, 222)"/><rect x="55" y="5" width="5" height="5" fill="rgb(219, 223, 233)"/><rect x="60" y="5" width="5" height="5" fill="rgb(219, 227, 237)"/><rect x="65" y="5" width="5" height="5" fill="rgb(206, 206, 206)"/><rect x="70" y="5" width="5" height="5" fill="rgb(199, 199, 199)"/><rect x="75" y="5" width="5" height="5" fill="rgb(225, 232, 230)"/><rect x="80" y="5" width="5" height="5" fill="rgb(198, 205, 203)"/><rect x="0" y="10" width="5" height="5" fill="rgb(203, 207, 217)"/><rect x="5" y="10" width="5" height="5" fill="rgb(207, 214, 212)"/><rect x="10" y="10" width="5" height="5" fill="rgb(229, 233, 243)"/><rect x="15" y="10" width="5" height="5" fill="rgb(201, 209, 219)"/><rect x="20" y="10" width="5" height="5" fill="rgb(207, 207, 207)"/><rect x="25" y="10" width="5" height="5" fill="rgb(229, 231, 229)"/><rect x="30" y="10" width="5" height="5" fill="rgb(203, 211, 221)"/><rect x="35" y="10" width="5" height="5" fill="rgb(221, 219, 211)"/><rect x="40" y="10" width="5" height="5" fill="rgb(201, 209, 219)"/><rect x="45" y="10" width="5" height="5" fill="rgb(224, 222, 214)"/><rect x="50" y="10" width="5" height="5" fill="rgb(232, 234, 232)"/><rect x="55" y="10" width="5" height="5" fill="rgb(207, 211, 221)"/><rect x="60" y="10" width="5" height="5" fill="rgb(230, 222, 231)"/><rect x="65" y="10" width="5" height="5" fill="rgb(219, 219, 219)"/><rect x="70" y="10" width="5" height="5" fill="rgb(204, 212, 222)"/><rect x="75" y="10" width="5" height="5" fill="rgb(213, 215, 213)"/><rect x="80" y="10" width="5" height="5" fill="rgb(228, 232, 242)"/><rect x="20" y="15" width="5" height="5" fill="rgb(244, 242, 234)"/><rect x="45" y="15" width="5" height="5" fill="rgb(252, 248, 246)"/></svg>
<svg style="position:absolute;left:425px;top:368.5px" width="24" height="9" viewBox="0 0 24 9"><g fill="#000"><circle cx="5.4" cy="4.5" r="1.8"/><circle cx="11.9" cy="4.5" r="1.8"/><circle cx="18.4" cy="4.5" r="1.8"/></g></svg>
<svg style="position:absolute;left:283px;top:408px" width="100" height="20" viewBox="0 0 100 20"><rect x="0" y="0" width="5" height="5" fill="rgb(246, 248, 246)"/><rect x="5" y="0" width="5" height="5" fill="rgb(240, 244, 254)"/><rect x="25" y="0" width="5" height="5" fill="rgb(237, 241, 251)"/><rect x="45" y="0" width="5" height="5" fill="rgb(247, 247, 247)"/><rect x="80" y="0" width="5" height="5" fill="rgb(249, 241, 250)"/><rect x="0" y="5" width="5" height="5" fill="rgb(221, 213, 222)"/><rect x="5" y="5" width="5" height="5" fill="rgb(232, 224, 233)"/><rect x="10" y="5" width="5" height="5" fill="rgb(227, 219, 228)"/><rect x="15" y="5" width="5" height="5" fill="rgb(207, 209, 207)"/><rect x="20" y="5" width="5" height="5" fill="rgb(202, 210, 220)"/><rect x="25" y="5" width="5" height="5" fill="rgb(226, 233, 231)"/><rect x="30" y="5" width="5" height="5" fill="rgb(214, 216, 214)"/><rect x="35" y="5" width="5" height="5" fill="rgb(221, 228, 226)"/><rect x="40" y="5" width="5" height="5" fill="rgb(231, 227, 225)"/><rect x="45" y="5" width="5" height="5" fill="rgb(202, 206, 216)"/><rect x="50" y="5" width="5" height="5" fill="rgb(218, 218, 218)"/><rect x="55" y="5" width="5" height="5" fill="rgb(219, 223, 233)"/><rect x="60" y="5" width="5" height="5" fill="rgb(233, 225, 234)"/><rect x="65" y="5" width="5" height="5" fill="rgb(215, 219, 229)"/><rect x="70" y="5" width="5" height="5" fill="rgb(227, 223, 221)"/><rect x="75" y="5" width="5" height="5" fill="rgb(214, 206, 215)"/><rect x="80" y="5" width="5" height="5" fill="rgb(229, 225, 223)"/><rect x="85" y="5" width="5" height="5" fill="rgb(215, 207, 216)"/><rect x="90" y="5" width="5" height="5" fill="rgb(208, 206, 198)"/><rect x="95" y="5" width="5" height="5" fill="rgb(200, 192, 201)"/><rect x="0" y="10" width="5" height="5" fill="rgb(209, 216, 214)"/><rect x="5" y="10" width="5" height="5" fill="rgb(217, 209, 218)"/><rect x="10" y="10" width="5" height="5" fill="rgb(218, 214, 212)"/><rect x="15" y="10" width="5" height="5" fill="rgb(207, 214, 212)"/><rect x="20" y="10" width="5" height="5" fill="rgb(215, 211, 209)"/><rect x="25" y="10" width="5" height="5" fill="rgb(229, 233, 243)"/><rect x="30" y="10" width="5" height="5" fill="rgb(232, 224, 233)"/><rect x="35" y="10" width="5" height="5" fill="rgb(225, 232, 230)"/><rect x="40" y="10" width="5" height="5" fill="rgb(205, 213, 223)"/><rect x="45" y="10" width="5" height="5" fill="rgb(215, 207, 216)"/><rect x="50" y="10" width="5" height="5" fill="rgb(238, 234, 232)"/><rect x="55" y="10" width="5" height="5" fill="rgb(241, 239, 231)"/><rect x="60" y="10" width="5" height="5" fill="rgb(226, 224, 216)"/><rect x="65" y="10" width="5" height="5" fill="rgb(207, 211, 221)"/><rect x="70" y="10" width="5" height="5" fill="rgb(232, 232, 232)"/><rect x="75" y="10" width="5" height="5" fill="rgb(220, 224, 234)"/><rect x="80" y="10" width="5" height="5" fill="rgb(232, 224, 233)"/><rect x="85" y="10" width="5" height="5" fill="rgb(239, 237, 229)"/><rect x="90" y="10" width="5" height="5" fill="rgb(209, 213, 223)"/><rect x="95" y="10" width="5" height="5" fill="rgb(226, 233, 231)"/><rect x="50" y="15" width="5" height="5" fill="rgb(247, 243, 241)"/><rect x="60" y="15" width="5" height="5" fill="rgb(239, 246, 244)"/></svg>
<svg style="position:absolute;left:425px;top:418.5px" width="24" height="9" viewBox="0 0 24 9"><g fill="#000"><circle cx="5.4" cy="4.5" r="1.8"/><circle cx="11.9" cy="4.5" r="1.8"/><circle cx="18.4" cy="4.5" r="1.8"/></g></svg>
<svg style="position:absolute;left:283px;top:458px" width="75" height="20" viewBox="0 0 75 20"><rect x="25" y="0" width="5" height="5" fill="rgb(250, 248, 240)"/><rect x="55" y="0" width="5" height="5" fill="rgb(244, 244, 244)"/><rect x="60" y="0" width="5" height="5" fill="rgb(230, 234, 244)"/><rect x="0" y="5" width="5" height="5" fill="rgb(225, 221, 219)"/><rect x="5" y="5" width="5" height="5" fill="rgb(216, 214, 206)"/><rect x="10" y="5" width="5" height="5" fill="rgb(204, 211, 209)"/><rect x="15" y="5" width="5" height="5" fill="rgb(217, 213, 211)"/><rect x="20" y="5" width="5" height="5" fill="rgb(224, 231, 229)"/><rect x="25" y="5" width="5" height="5" fill="rgb(220, 228, 238)"/><rect x="30" y="5" width="5" height="5" fill="rgb(198, 202, 212)"/><rect x="35" y="5" width="5" height="5" fill="rgb(217, 215, 207)"/><rect x="40" y="5" width="5" height="5" fill="rgb(223, 221, 213)"/><rect x="45" y="5" width="5" height="5" fill="rgb(192, 200, 210)"/><rect x="50" y="5" width="5" height="5" fill="rgb(208, 206, 198)"/><rect x="55" y="5" width="5" height="5" fill="rgb(213, 213, 213)"/><rect x="60" y="5" width="5" height="5" fill="rgb(225, 217, 226)"/><rect x="65" y="5" width="5" height="5" fill="rgb(215, 223, 233)"/><rect x="70" y="5" width="5" height="5" fill="rgb(193, 197, 207)"/><rect x="0" y="10" width="5" height="5" fill="rgb(208, 210, 208)"/><rect x="5" y="10" width="5" height="5" fill="rgb(232, 232, 232)"/><rect x="10" y="10" width="5" height="5" fill="rgb(227, 223, 221)"/><rect x="15" y="10" width="5" height="5" fill="rgb(217, 209, 218)"/><rect x="20" y="10" width="5" height="5" fill="rgb(212, 204, 213)"/><rect x="25" y="10" width="5" height="5" fill="rgb(221, 223, 221)"/><rect x="30" y="10" width="5" height="5" fill="rgb(209, 209, 209)"/><rect x="35" y="10" width="5" height="5" fill="rgb(230, 226, 224)"/><rect x="40" y="10" width="5" height="5" fill="rgb(211, 219, 229)"/><rect x="45" y="10" width="5" height="5" fill="rgb(204, 208, 218)"/><rect x="50" y="10" width="5" height="5" fill="rgb(221, 221, 221)"/><rect x="55" y="10" width="5" height="5" fill="rgb(221, 228, 226)"/><rect x="60" y="10" width="5" height="5" fill="rgb(221, 219, 211)"/><rect x="65" y="10" width="5" height="5" fill="rgb(229, 221, 230)"/><rect x="70" y="10" width="5" height="5" fill="rgb(215, 207, 216)"/></svg>
<svg style="position:absolute;left:425px;top:468.5px" width="24" height="9" viewBox="0 0 24 9"><g fill="#000"><circle cx="5.4" cy="4.5" r="1.8"/><circle cx="11.9" cy="4.5" r="1.8"/><circle cx="18.4" cy="4.5" r="1.8"/></g></svg>
<svg style="position:absolute;left:283px;top:508px" width="60" height="20" viewBox="0 0 60 20"><rect x="35" y="0" width="5" height="5" fill="rgb(243, 241, 233)"/><rect x="45" y="0" width="5" height="5" fill="rgb(247, 249, 247)"/><rect x="55" y="0" width="5" height="5" fill="rgb(230, 238, 248)"/><rect x="0" y="5" width="5" height="5" fill="rgb(209, 213, 223)"/><rect x="5" y="5" width="5" height="5" fill="rgb(221, 221, 221)"/><rect x="10" y="5" width="5" height="5" fill="rgb(233, 229, 227)"/><rect x="15" y="5" width="5" height="5" fill="rgb(206, 206, 206)"/><rect x="20" y="5" width="5" height="5" fill="rgb(196, 200, 210)"/><rect x="25" y="5" width="5" height="5" fill="rgb(223, 225, 223)"/><rect x="30" y="5" width="5" height="5" fill="rgb(221, 217, 215)"/><rect x="35" y="5" width="5" height="5" fill="rgb(201, 201, 201)"/><rect x="40" y="5" width="5" height="5" fill="rgb(220, 227, 225)"/><rect x="45" y="5" width="5" height="5" fill="rgb(203, 207, 217)"/><rect x="50" y="5" width="5" height="5" fill="rgb(222, 226, 236)"/><rect x="55" y="5" width="5" height="5" fill="rgb(219, 219, 219)"/><rect x="0" y="10" width="5" height="5" fill="rgb(214, 210, 208)"/><rect x="5" y="10" width="5" height="5" fill="rgb(207, 207, 207)"/><rect x="10" y="10" width="5" height="5" fill="rgb(199, 203, 213)"/><rect x="15" y="10" width="5" height="5" fill="rgb(218, 216, 208)"/><rect x="20" y="10" width="5" height="5" fill="rgb(229, 221, 230)"/><rect x="25" y="10" width="5" height="5" fill="rgb(218, 225, 223)"/><rect x="30" y="10" width="5" height="5" fill="rgb(233, 225, 234)"/><rect x="35" y="10" width="5" height="5" fill="rgb(231, 231, 231)"/><rect x="40" y="10" width="5" height="5" fill="rgb(229, 236, 234)"/><rect x="45" y="10" width="5" height="5" fill="rgb(221, 221, 221)"/><rect x="50" y="10" width="5" height="5" fill="rgb(197, 205, 215)"/><rect x="55" y="10" width="5" height="5" fill="rgb(207, 214, 212)"/><rect x="20" y="15" width="5" height="5" fill="rgb(236, 244, 254)"/><rect x="25" y="15" width="5" height="5" fill="rgb(241, 245, 255)"/><rect x="40" y="15" width="5" height="5" fill="rgb(250, 246, 244)"/></svg>
<svg style="position:absolute;left:425px;top:518.5px" width="24" height="9" viewBox="0 0 24 9"><g fill="#000"><circle cx="5.4" cy="4.5" r="1.8"/><circle cx="11.9" cy="4.5" r="1.8"/><circle cx="18.4" cy="4.5" r="1.8"/></g></svg>
<svg style="position:absolute;left:283px;top:558px" width="60" height="20" viewBox="0 0 60 20"><rect x="35" y="0" width="5" height="5" fill="rgb(234, 238, 248)"/><rect x="45" y="0" width="5" height="5" fill="rgb(250, 242, 251)"/><rect x="55" y="0" width="5" height="5" fill="rgb(246, 238, 247)"/><rect x="0" y="5" width="5" height="5" fill="rgb(230, 226, 224)"/><rect x="5" y="5" width="5" height="5" fill="rgb(198, 206, 216)"/><rect x="10" y="5" width="5" height="5" fill="rgb(220, 228, 238)"/><rect x="15" y="5" width="5" height="5" fill="rgb(221, 219, 211)"/><rect x="20" y="5" width="5" height="5" fill="rgb(211, 203, 212)"/><rect x="25" y="5" width="5" height="5" fill="rgb(223, 230, 228)"/><rect x="30" y="5" width="5" height="5" fill="rgb(232, 224, 233)"/><rect x="35" y="5" width="5" height="5" fill="rgb(234, 232, 224)"/><rect x="40" y="5" width="5" height="5" fill="rgb(209, 217, 227)"/><rect x="45" y="5" width="5" height="5" fill="rgb(209, 207, 199)"/><rect x="50" y="5" width="5" height="5" fill="rgb(222, 224, 222)"/><rect x="55" y="5" width="5" height="5" fill="rgb(199, 195, 193)"/><rect x="0" y="10" width="5" height="5" fill="rgb(218, 222, 232)"/><rect x="5" y="10" width="5" height="5" fill="rgb(233, 225, 234)"/><rect x="10" y="10" width="5" height="5" fill="rgb(217, 221, 231)"/><rect x="15" y="10" width="5" height="5" fill="rgb(213, 211, 203)"/><rect x="20" y="10" width="5" height="5" fill="rgb(206, 214, 224)"/><rect x="25" y="10" width="5" height="5" fill="rgb(227, 229, 227)"/><rect x="30" y="10" width="5" height="5" fill="rgb(213, 211, 203)"/><rect x="35" y="10" width="5" height="5" fill="rgb(214, 218, 228)"/><rect x="40" y="10" width="5" height="5" fill="rgb(226, 228, 226)"/><rect x="45" y="10" width="5" height="5" fill="rgb(229, 229, 229)"/><rect x="50" y="10" width="5" height="5" fill="rgb(215, 211, 209)"/><rect x="55" y="10" width="5" height="5" fill="rgb(234, 236, 234)"/><rect x="30" y="15" width="5" height="5" fill="rgb(244, 251, 249)"/></svg>
<svg style="position:absolute;left:425px;top:568.5px" width="24" height="9" viewBox="0 0 24 9"><g fill="#000"><circle cx="5.4" cy="4.5" r="1.8"/><circle cx="11.9" cy="4.5" r="1.8"/><circle cx="18.4" cy="4.5" r="1.8"/></g></svg>
<svg style="position:absolute;left:283px;top:608px" width="45" height="20" viewBox="0 0 45 20"><rect x="10" y="0" width="5" height="5" fill="rgb(239, 246, 244)"/><rect x="15" y="0" width="5" height="5" fill="rgb(239, 247, 255)"/><rect x="0" y="5" width="5" height="5" fill="rgb(205, 212, 210)"/><rect x="5" y="5" width="5" height="5" fill="rgb(219, 223, 233)"/><rect x="10" y="5" width="5" height="5" fill="rgb(214, 221, 219)"/><rect x="15" y="5" width="5" height="5" fill="rgb(215, 217, 215)"/><rect x="20" y="5" width="5" height="5" fill="rgb(200, 204, 214)"/><rect x="25" y="5" width="5" height="5" fill="rgb(203, 201, 193)"/><rect x="30" y="5" width="5" height="5" fill="rgb(195, 199, 209)"/><rect x="35" y="5" width="5" height="5" fill="rgb(214, 221, 219)"/><rect x="40" y="5" width="5" height="5" fill="rgb(206, 214, 224)"/><rect x="0" y="10" width="5" height="5" fill="rgb(222, 218, 216)"/><rect x="5" y="10" width="5" height="5" fill="rgb(205, 212, 210)"/><rect x="10" y="10" width="5" height="5" fill="rgb(216, 212, 210)"/><rect x="15" y="10" width="5" height="5" fill="rgb(237, 233, 231)"/><rect x="20" y="10" width="5" height="5" fill="rgb(207, 215, 225)"/><rect x="25" y="10" width="5" height="5" fill="rgb(225, 227, 225)"/><rect x="30" y="10" width="5" height="5" fill="rgb(224, 216, 225)"/><rect x="35" y="10" width="5" height="5" fill="rgb(222, 218, 216)"/><rect x="40" y="10" width="5" height="5" fill="rgb(221, 213, 222)"/><rect x="25" y="15" width="5" height="5" fill="rgb(246, 244, 236)"/></svg>
<svg style="position:absolute;left:425px;top:618.5px" width="24" height="9" viewBox="0 0 24 9"><g fill="#000"><circle cx="5.4" cy="4.5" r="1.8"/><circle cx="11.9" cy="4.5" r="1.8"/><circle cx="18.4" cy="4.5" r="1.8"/></g></svg>
<svg style="position:absolute;left:283px;top:658px" width="115" height="20" viewBox="0 0 115 20"><rect x="30" y="0" width="5" height="5" fill="rgb(249, 247, 239)"/><rect x="85" y="0" width="5" height="5" fill="rgb(246, 244, 236)"/><rect x="90" y="0" width="5" height="5" fill="rgb(243, 241, 233)"/><rect x="100" y="0" width="5" height="5" fill="rgb(245, 243, 235)"/><rect x="0" y="5" width="5" height="5" fill="rgb(216, 214, 206)"/><rect x="5" y="5" width="5" height="5" fill="rgb(212, 220, 230)"/><rect x="10" y="5" width="5" height="5" fill="rgb(202, 194, 203)"/><rect x="15" y="5" width="5" height="5" fill="rgb(208, 212, 222)"/><rect x="20" y="5" width="5" height="5" fill="rgb(197, 204, 202)"/><rect x="25" y="5" width="5" height="5" fill="rgb(200, 208, 218)"/><rect x="30" y="5" width="5" height="5" fill="rgb(222, 229, 227)"/><rect x="35" y="5" width="5" height="5" fill="rgb(219, 219, 219)"/><rect x="40" y="5" width="5" height="5" fill="rgb(225, 223, 215)"/><rect x="45" y="5" width="5" height="5" fill="rgb(208, 216, 226)"/><rect x="50" y="5" width="5" height="5" fill="rgb(212, 220, 230)"/><rect x="55" y="5" width="5" height="5" fill="rgb(221, 223, 221)"/><rect x="60" y="5" width="5" height="5" fill="rgb(231, 227, 225)"/><rect x="65" y="5" width="5" height="5" fill="rgb(225, 217, 226)"/><rect x="70" y="5" width="5" height="5" fill="rgb(217, 224, 222)"/><rect x="75" y="5" width="5" height="5" fill="rgb(226, 218, 227)"/><rect x="80" y="5" width="5" height="5" fill="rgb(207, 211, 221)"/><rect x="85" y="5" width="5" height="5" fill="rgb(204, 204, 204)"/><rect x="90" y="5" width="5" height="5" fill="rgb(202, 210, 220)"/><rect x="95" y="5" width="5" height="5" fill="rgb(200, 207, 205)"/><rect x="100" y="5" width="5" height="5" fill="rgb(229, 231, 229)"/><rect x="105" y="5" width="5" height="5" fill="rgb(215, 217, 215)"/><rect x="110" y="5" width="5" height="5" fill="rgb(200, 207, 205)"/><rect x="0" y="10" width="5" height="5" fill="rgb(214, 206, 215)"/><rect x="5" y="10" width="5" height="5" fill="rgb(212, 210, 202)"/><rect x="10" y="10" width="5" height="5" fill="rgb(218, 222, 232)"/><rect x="15" y="10" width="5" height="5" fill="rgb(224, 216, 225)"/><rect x="20" y="10" width="5" height="5" fill="rgb(199, 203, 213)"/><rect x="25" y="10" width="5" height="5" fill="rgb(237, 239, 237)"/><rect x="30" y="10" width="5" height="5" fill="rgb(218, 226, 236)"/><rect x="35" y="10" width="5" height="5" fill="rgb(230, 237, 235)"/><rect x="40" y="10" width="5" height="5" fill="rgb(204, 208, 218)"/><rect x="45" y="10" width="5" height="5" fill="rgb(217, 209, 218)"/><rect x="50" y="10" width="5" height="5" fill="rgb(227, 229, 227)"/><rect x="55" y="10" width="5" height="5" fill="rgb(228, 228, 228)"/><rect x="60" y="10" width="5" height="5" fill="rgb(220, 227, 225)"/><rect x="65" y="10" width="5" height="5" fill="rgb(221, 223, 221)"/><rect x="70" y="10" width="5" height="5" fill="rgb(210, 214, 224)"/><rect x="75" y="10" width="5" height="5" fill="rgb(215, 211, 209)"/><rect x="80" y="10" width="5" height="5" fill="rgb(212, 212, 212)"/><rect x="85" y="10" width="5" height="5" fill="rgb(230, 228, 220)"/><rect x="90" y="10" width="5" height="5" fill="rgb(212, 210, 202)"/><rect x="95" y="10" width="5" height="5" fill="rgb(203, 211, 221)"/><rect x="100" y="10" width="5" height="5" fill="rgb(239, 235, 233)"/><rect x="105" y="10" width="5" height="5" fill="rgb(213, 213, 213)"/><rect x="110" y="10" width="5" height="5" fill="rgb(211, 219, 229)"/><rect x="5" y="15" width="5" height="5" fill="rgb(247, 239, 248)"/><rect x="30" y="15" width="5" height="5" fill="rgb(236, 243, 241)"/></svg>
<svg style="position:absolute;left:425px;top:668.5px" width="24" height="9" viewBox="0 0 24 9"><g fill="#000"><circle cx="5.4" cy="4.5" r="1.8"/><circle cx="11.9" cy="4.5" r="1.8"/><circle cx="18.4" cy="4.5" r="1.8"/></g></svg>
<svg style="position:absolute;left:281px;top:706px" width="65" height="20" viewBox="0 0 65 20"><rect x="0" y="0" width="5" height="5" fill="rgb(254, 252, 244)"/><rect x="25" y="0" width="5" height="5" fill="rgb(232, 236, 246)"/><rect x="60" y="0" width="5" height="5" fill="rgb(245, 237, 246)"/><rect x="0" y="5" width="5" height="5" fill="rgb(194, 201, 199)"/><rect x="5" y="5" width="5" height="5" fill="rgb(220, 216, 214)"/><rect x="10" y="5" width="5" height="5" fill="rgb(230, 226, 224)"/><rect x="15" y="5" width="5" height="5" fill="rgb(195, 202, 200)"/><rect x="20" y="5" width="5" height="5" fill="rgb(207, 199, 208)"/><rect x="25" y="5" width="5" height="5" fill="rgb(220, 216, 214)"/><rect x="30" y="5" width="5" height="5" fill="rgb(197, 199, 197)"/><rect x="35" y="5" width="5" height="5" fill="rgb(210, 206, 204)"/><rect x="40" y="5" width="5" height="5" fill="rgb(224, 228, 238)"/><rect x="45" y="5" width="5" height="5" fill="rgb(221, 228, 226)"/><rect x="50" y="5" width="5" height="5" fill="rgb(222, 226, 236)"/><rect x="55" y="5" width="5" height="5" fill="rgb(200, 204, 214)"/><rect x="60" y="5" width="5" height="5" fill="rgb(202, 200, 192)"/><rect x="0" y="10" width="5" height="5" fill="rgb(231, 233, 231)"/><rect x="5" y="10" width="5" height="5" fill="rgb(228, 228, 228)"/><rect x="10" y="10" width="5" height="5" fill="rgb(219, 221, 219)"/><rect x="15" y="10" width="5" height="5" fill="rgb(224, 231, 229)"/><rect x="20" y="10" width="5" height="5" fill="rgb(226, 218, 227)"/><rect x="25" y="10" width="5" height="5" fill="rgb(213, 217, 227)"/><rect x="30" y="10" width="5" height="5" fill="rgb(205, 209, 219)"/><rect x="35" y="10" width="5" height="5" fill="rgb(207, 209, 207)"/><rect x="40" y="10" width="5" height="5" fill="rgb(237, 229, 238)"/><rect x="45" y="10" width="5" height="5" fill="rgb(211, 207, 205)"/><rect x="50" y="10" width="5" height="5" fill="rgb(225, 225, 225)"/><rect x="55" y="10" width="5" height="5" fill="rgb(231, 229, 221)"/><rect x="60" y="10" width="5" height="5" fill="rgb(233, 235, 233)"/></svg>
<svg style="position:absolute;left:425px;top:718.5px" width="24" height="9" viewBox="0 0 24 9"><g fill="#000"><circle cx="5.4" cy="4.5" r="1.8"/><circle cx="11.9" cy="4.5" r="1.8"/><circle cx="18.4" cy="4.5" r="1.8"/></g></svg>
<svg style="position:absolute;left:283px;top:756px" width="70" height="20" viewBox="0 0 70 20"><rect x="15" y="0" width="5" height="5" fill="rgb(239, 246, 244)"/><rect x="55" y="0" width="5" height="5" fill="rgb(241, 243, 241)"/><rect x="60" y="0" width="5" height="5" fill="rgb(237, 237, 237)"/><rect x="0" y="5" width="5" height="5" fill="rgb(197, 201, 211)"/><rect x="5" y="5" width="5" height="5" fill="rgb(217, 221, 231)"/><rect x="10" y="5" width="5" height="5" fill="rgb(198, 202, 212)"/><rect x="15" y="5" width="5" height="5" fill="rgb(201, 193, 202)"/><rect x="20" y="5" width="5" height="5" fill="rgb(231, 229, 221)"/><rect x="25" y="5" width="5" height="5" fill="rgb(216, 212, 210)"/><rect x="30" y="5" width="5" height="5" fill="rgb(234, 232, 224)"/><rect x="35" y="5" width="5" height="5" fill="rgb(190, 198, 208)"/><rect x="40" y="5" width="5" height="5" fill="rgb(225, 225, 225)"/><rect x="45" y="5" width="5" height="5" fill="rgb(227, 225, 217)"/><rect x="50" y="5" width="5" height="5" fill="rgb(209, 211, 209)"/><rect x="55" y="5" width="5" height="5" fill="rgb(201, 209, 219)"/><rect x="60" y="5" width="5" height="5" fill="rgb(231, 223, 232)"/><rect x="65" y="5" width="5" height="5" fill="rgb(213, 211, 203)"/><rect x="0" y="10" width="5" height="5" fill="rgb(211, 207, 205)"/><rect x="5" y="10" width="5" height="5" fill="rgb(234, 236, 234)"/><rect x="10" y="10" width="5" height="5" fill="rgb(234, 236, 234)"/><rect x="15" y="10" width="5" height="5" fill="rgb(207, 211, 221)"/><rect x="20" y="10" width="5" height="5" fill="rgb(239, 231, 240)"/><rect x="25" y="10" width="5" height="5" fill="rgb(217, 224, 222)"/><rect x="30" y="10" width="5" height="5" fill="rgb(238, 236, 228)"/><rect x="35" y="10" width="5" height="5" fill="rgb(235, 227, 236)"/><rect x="40" y="10" width="5" height="5" fill="rgb(207, 207, 207)"/><rect x="45" y="10" width="5" height="5" fill="rgb(210, 206, 204)"/><rect x="50" y="10" width="5" height="5" fill="rgb(216, 223, 221)"/><rect x="55" y="10" width="5" height="5" fill="rgb(202, 206, 216)"/><rect x="60" y="10" width="5" height="5" fill="rgb(210, 202, 211)"/><rect x="65" y="10" width="5" height="5" fill="rgb(202, 206, 216)"/><rect x="10" y="15" width="5" height="5" fill="rgb(243, 241, 233)"/><rect x="50" y="15" width="5" height="5" fill="rgb(240, 240, 240)"/></svg>
<svg style="position:absolute;left:425px;top:768.5px" width="24" height="9" viewBox="0 0 24 9"><g fill="#000"><circle cx="5.4" cy="4.5" r="1.8"/><circle cx="11.9" cy="4.5" r="1.8"/><circle cx="18.4" cy="4.5" r="1.8"/></g></svg>
<svg style="position:absolute;left:283px;top:806px" width="50" height="20" viewBox="0 0 50 20"><rect x="35" y="0" width="5" height="5" fill="rgb(243, 245, 243)"/><rect x="45" y="0" width="5" height="5" fill="rgb(249, 247, 239)"/><rect x="0" y="5" width="5" height="5" fill="rgb(200, 192, 201)"/><rect x="5" y="5" width="5" height="5" fill="rgb(201, 209, 219)"/><rect x="10" y="5" width="5" height="5" fill="rgb(224, 222, 214)"/><rect x="15" y="5" width="5" height="5" fill="rgb(226, 233, 231)"/><rect x="20" y="5" width="5" height="5" fill="rgb(207, 203, 201)"/><rect x="25" y="5" width="5" height="5" fill="rgb(229, 225, 223)"/><rect x="30" y="5" width="5" height="5" fill="rgb(215, 213, 205)"/><rect x="35" y="5" width="5" height="5" fill="rgb(220, 216, 214)"/><rect x="40" y="5" width="5" height="5" fill="rgb(207, 203, 201)"/><rect x="45" y="5" width="5" height="5" fill="rgb(206, 210, 220)"/><rect x="0" y="10" width="5" height="5" fill="rgb(207, 211, 221)"/><rect x="5" y="10" width="5" height="5" fill="rgb(221, 217, 215)"/><rect x="10" y="10" width="5" height="5" fill="rgb(217, 224, 222)"/><rect x="15" y="10" width="5" height="5" fill="rgb(230, 232, 230)"/><rect x="20" y="10" width="5" height="5" fill="rgb(240, 232, 241)"/><rect x="25" y="10" width="5" height="5" fill="rgb(232, 232, 232)"/><rect x="30" y="10" width="5" height="5" fill="rgb(213, 211, 203)"/><rect x="35" y="10" width="5" height="5" fill="rgb(214, 218, 228)"/><rect x="40" y="10" width="5" height="5" fill="rgb(216, 214, 206)"/><rect x="45" y="10" width="5" height="5" fill="rgb(199, 203, 213)"/><rect x="15" y="15" width="5" height="5" fill="rgb(237, 245, 255)"/><rect x="45" y="15" width="5" height="5" fill="rgb(250, 246, 244)"/></svg>
<svg style="position:absolute;left:425px;top:818.5px" width="24" height="9" viewBox="0 0 24 9"><g fill="#000"><circle cx="5.4" cy="4.5" r="1.8"/><circle cx="11.9" cy="4.5" r="1.8"/><circle cx="18.4" cy="4.5" r="1.8"/></g></svg>
<svg style="position:absolute;left:283px;top:856px" width="95" height="20" viewBox="0 0 95 20"><rect x="30" y="0" width="5" height="5" fill="rgb(243, 235, 244)"/><rect x="85" y="0" width="5" height="5" fill="rgb(249, 245, 243)"/><rect x="0" y="5" width="5" height="5" fill="rgb(204, 196, 205)"/><rect x="5" y="5" width="5" height="5" fill="rgb(193, 201, 211)"/><rect x="10" y="5" width="5" height="5" fill="rgb(228, 224, 222)"/><rect x="15" y="5" width="5" height="5" fill="rgb(227, 227, 227)"/><rect x="20" y="5" width="5" height="5" fill="rgb(213, 221, 231)"/><rect x="25" y="5" width="5" height="5" fill="rgb(221, 228, 226)"/><rect x="30" y="5" width="5" height="5" fill="rgb(235, 233, 225)"/><rect x="35" y="5" width="5" height="5" fill="rgb(204, 204, 204)"/><rect x="40" y="5" width="5" height="5" fill="rgb(224, 224, 224)"/><rect x="45" y="5" width="5" height="5" fill="rgb(204, 211, 209)"/><rect x="50" y="5" width="5" height="5" fill="rgb(209, 201, 210)"/><rect x="55" y="5" width="5" height="5" fill="rgb(225, 225, 225)"/><rect x="60" y="5" width="5" height="5" fill="rgb(202, 206, 216)"/><rect x="65" y="5" width="5" height="5" fill="rgb(196, 204, 214)"/><rect x="70" y="5" width="5" height="5" fill="rgb(223, 223, 223)"/><rect x="75" y="5" width="5" height="5" fill="rgb(205, 203, 195)"/><rect x="80" y="5" width="5" height="5" fill="rgb(222, 218, 216)"/><rect x="85" y="5" width="5" height="5" fill="rgb(231, 229, 221)"/><rect x="90" y="5" width="5" height="5" fill="rgb(225, 217, 226)"/><rect x="0" y="10" width="5" height="5" fill="rgb(200, 208, 218)"/><rect x="5" y="10" width="5" height="5" fill="rgb(213, 205, 214)"/><rect x="10" y="10" width="5" height="5" fill="rgb(213, 209, 207)"/><rect x="15" y="10" width="5" height="5" fill="rgb(225, 232, 230)"/><rect x="20" y="10" width="5" height="5" fill="rgb(206, 206, 206)"/><rect x="25" y="10" width="5" height="5" fill="rgb(238, 234, 232)"/><rect x="30" y="10" width="5" height="5" fill="rgb(236, 234, 226)"/><rect x="35" y="10" width="5" height="5" fill="rgb(224, 226, 224)"/><rect x="40" y="10" width="5" height="5" fill="rgb(238, 234, 232)"/><rect x="45" y="10" width="5" height="5" fill="rgb(224, 232, 242)"/><rect x="50" y="10" width="5" height="5" fill="rgb(220, 222, 220)"/><rect x="55" y="10" width="5" height="5" fill="rgb(216, 220, 230)"/><rect x="60" y="10" width="5" height="5" fill="rgb(227, 229, 227)"/><rect x="65" y="10" width="5" height="5" fill="rgb(224, 222, 214)"/><rect x="70" y="10" width="5" height="5" fill="rgb(232, 228, 226)"/><rect x="75" y="10" width="5" height="5" fill="rgb(214, 222, 232)"/><rect x="80" y="10" width="5" height="5" fill="rgb(233, 233, 233)"/><rect x="85" y="10" width="5" height="5" fill="rgb(217, 224, 222)"/><rect x="90" y="10" width="5" height="5" fill="rgb(210, 212, 210)"/><rect x="55" y="15" width="5" height="5" fill="rgb(240, 247, 245)"/><rect x="60" y="15" width="5" height="5" fill="rgb(244, 246, 244)"/></svg>
<svg style="position:absolute;left:425px;top:868.5px" width="24" height="9" viewBox="0 0 24 9"><g fill="#000"><circle cx="5.4" cy="4.5" r="1.8"/><circle cx="11.9" cy="4.5" r="1.8"/><circle cx="18.4" cy="4.5" r="1.8"/></g></svg>
<div style="position:absolute;left:471px;top:94px;width:17px;height:792px;background:#f0f0f0;"></div>
<svg style="position:absolute;left:471px;top:94px" width="17" height="17" viewBox="0 0 17 17"><polygon points="5,11 8.5,7 12,11" fill="#a3a3a3"/></svg>
<div style="position:absolute;left:473px;top:111px;width:13px;height:775px;background:#c1c1c1;"></div>
<div style="position:absolute;left:488px;top:94px;width:1px;height:792px;background:#d0d0d0;"></div>
<div style="position:absolute;left:489px;top:94px;width:3px;height:792px;background:#f7f7f7;"></div>
<div style="position:absolute;left:492px;top:94px;width:1px;height:792px;background:#d2d2d2;"></div>
<div style="position:absolute;left:493px;top:94px;width:806px;height:792px;background:#ffffff;"></div>
<div style="position:absolute;left:493px;top:94px;width:806px;height:1px;background:#f4f4f4;"></div>
<div style="position:absolute;left:493px;top:95px;width:806px;height:25px;background:#e9e9e9;"></div>
<div style="position:absolute;left:493px;top:120px;width:806px;height:1px;background:#d5d5d5;"></div>
<div style="position:absolute;left:493px;top:94px;width:75px;height:25px;background:#19599b;"></div>
<div class="t" style="left:499px;top:100px;font-size:11.5px;line-height:14px;color:#ffffff;font-weight:700;font-style:normal;transform:scaleX(0.8984);transform-origin:0 0;">REVISION 1</div>
<div class="t" style="left:573px;top:100px;font-size:11.5px;line-height:14px;color:#333333;font-weight:400;font-style:normal;transform:scaleX(0.8747);transform-origin:0 0;">CREATED Nov 26, 2020, 7:30:49 PM</div>
<svg style="position:absolute;left:744px;top:100px" width="20" height="14" viewBox="0 0 20 14"><path d="M1.6 4 L9.6 12 L17.3 4.2" fill="none" stroke="#5a5a5a" stroke-width="0.9"/></svg>
<div style="position:absolute;left:493px;top:161px;width:806px;height:1px;background:#d9d9d9;"></div>
<div class="t" style="left:504.7px;top:133px;font-size:13px;line-height:16px;color:#0f74d0;font-weight:400;font-style:normal;transform:scaleX(0.9588);transform-origin:0 0;">Design</div>
<div class="t" style="left:575.8px;top:133px;font-size:13px;line-height:16px;color:#444444;font-weight:400;font-style:normal;transform:scaleX(0.9727);transform-origin:0 0;">Settings</div>
<div style="position:absolute;left:561px;top:156px;width:76px;height:3px;background:#555555;"></div>
<div class="t" style="left:654.4px;top:133px;font-size:13px;line-height:16px;color:#0f74d0;font-weight:400;font-style:normal;transform:scaleX(0.8975);transform-origin:0 0;">Test</div>
<div class="t" style="left:708.7px;top:133px;font-size:13px;line-height:16px;color:#0f74d0;font-weight:400;font-style:normal;transform:scaleX(0.9191);transform-origin:0 0;">Revisions</div>
<div class="t" style="left:793.7px;top:133px;font-size:13px;line-height:16px;color:#0f74d0;font-weight:400;font-style:normal;transform:scaleX(0.9774);transform-origin:0 0;">Change log</div>
<div style="position:absolute;left:555px;top:114px;width:85px;height:47px;border:2px solid #f40000;box-shadow:inset 2px 3px 4px rgba(0,0,0,0.22), 3px 3px 4px rgba(0,0,0,0.35);"></div>
<div class="t" style="left:519.5px;top:180px;font-size:23px;line-height:29px;color:#323130;font-weight:400;font-style:normal;transform:scaleX(0.9288);transform-origin:0 0;">General</div>
<div class="t" style="left:521px;top:227px;font-size:16px;line-height:20px;color:#f00000;font-weight:400;font-style:normal;">*</div>
<div class="t" style="left:539.2px;top:228px;font-size:13px;line-height:16px;color:#323232;font-weight:400;font-style:normal;transform:scaleX(0.9649);transform-origin:0 0;">Display name</div>
<div style="position:absolute;left:662px;top:226px;width:605px;height:21px;border:1px solid #8c8c8c;background:#fff;"></div>
<svg style="position:absolute;left:668px;top:230px" width="60" height="15" viewBox="0 0 60 15"><rect x="0" y="0" width="5" height="5" fill="rgb(242, 249, 247)"/><rect x="5" y="0" width="5" height="5" fill="rgb(251, 247, 245)"/><rect x="10" y="0" width="5" height="5" fill="rgb(242, 249, 247)"/><rect x="25" y="0" width="5" height="5" fill="rgb(236, 240, 250)"/><rect x="30" y="0" width="5" height="5" fill="rgb(250, 250, 250)"/><rect x="40" y="0" width="5" height="5" fill="rgb(240, 247, 245)"/><rect x="55" y="0" width="5" height="5" fill="rgb(244, 242, 234)"/><rect x="0" y="5" width="5" height="5" fill="rgb(206, 202, 200)"/><rect x="5" y="5" width="5" height="5" fill="rgb(221, 223, 221)"/><rect x="10" y="5" width="5" height="5" fill="rgb(206, 202, 200)"/><rect x="15" y="5" width="5" height="5" fill="rgb(221, 221, 221)"/><rect x="20" y="5" width="5" height="5" fill="rgb(211, 219, 229)"/><rect x="25" y="5" width="5" height="5" fill="rgb(231, 229, 221)"/><rect x="30" y="5" width="5" height="5" fill="rgb(214, 210, 208)"/><rect x="40" y="5" width="5" height="5" fill="rgb(197, 195, 187)"/><rect x="45" y="5" width="5" height="5" fill="rgb(201, 193, 202)"/><rect x="50" y="5" width="5" height="5" fill="rgb(213, 205, 214)"/><rect x="55" y="5" width="5" height="5" fill="rgb(191, 191, 191)"/><rect x="0" y="10" width="5" height="5" fill="rgb(207, 214, 212)"/><rect x="5" y="10" width="5" height="5" fill="rgb(237, 229, 238)"/><rect x="10" y="10" width="5" height="5" fill="rgb(232, 228, 226)"/><rect x="15" y="10" width="5" height="5" fill="rgb(220, 222, 220)"/><rect x="20" y="10" width="5" height="5" fill="rgb(220, 220, 220)"/><rect x="25" y="10" width="5" height="5" fill="rgb(240, 238, 230)"/><rect x="30" y="10" width="5" height="5" fill="rgb(238, 236, 228)"/><rect x="40" y="10" width="5" height="5" fill="rgb(220, 227, 225)"/><rect x="45" y="10" width="5" height="5" fill="rgb(231, 227, 225)"/><rect x="50" y="10" width="5" height="5" fill="rgb(210, 214, 224)"/><rect x="55" y="10" width="5" height="5" fill="rgb(228, 226, 218)"/></svg>
<svg style="position:absolute;left:1240px;top:228px" width="18" height="18" viewBox="0 0 18 18"><rect x="3.5" y="1.5" width="10" height="15" rx="1.5" fill="#f4f4f4" stroke="#8a8a8a" stroke-width="1"/><path d="M8.5 4 L10 8 H7 Z" fill="#777"/><rect x="6" y="9.5" width="5" height="1" fill="#999"/><rect x="6" y="11.5" width="5" height="1" fill="#999"/></svg>
<div class="t" style="left:521px;top:265px;font-size:16px;line-height:20px;color:#f00000;font-weight:400;font-style:normal;">*</div>
<div class="t" style="left:539.2px;top:266px;font-size:13px;line-height:16px;color:#323232;font-weight:400;font-style:normal;">Name</div>
<div style="position:absolute;left:662px;top:264px;width:605px;height:21px;border:1px solid #8c8c8c;background:#efefef;"></div>
<svg style="position:absolute;left:668px;top:269px" width="60" height="15" viewBox="0 0 60 15"><rect x="0" y="0" width="5" height="5" fill="rgb(233, 235, 233)"/><rect x="5" y="0" width="5" height="5" fill="rgb(217, 219, 217)"/><rect x="10" y="0" width="5" height="5" fill="rgb(233, 229, 227)"/><rect x="15" y="0" width="5" height="5" fill="rgb(215, 222, 220)"/><rect x="20" y="0" width="5" height="5" fill="rgb(229, 225, 223)"/><rect x="25" y="0" width="5" height="5" fill="rgb(227, 225, 217)"/><rect x="30" y="0" width="5" height="5" fill="rgb(230, 222, 231)"/><rect x="40" y="0" width="5" height="5" fill="rgb(220, 216, 214)"/><rect x="45" y="0" width="5" height="5" fill="rgb(224, 231, 229)"/><rect x="50" y="0" width="5" height="5" fill="rgb(222, 226, 236)"/><rect x="55" y="0" width="5" height="5" fill="rgb(226, 230, 240)"/><rect x="0" y="5" width="5" height="5" fill="rgb(167, 171, 181)"/><rect x="5" y="5" width="5" height="5" fill="rgb(180, 172, 181)"/><rect x="10" y="5" width="5" height="5" fill="rgb(208, 215, 213)"/><rect x="15" y="5" width="5" height="5" fill="rgb(194, 194, 194)"/><rect x="20" y="5" width="5" height="5" fill="rgb(179, 175, 173)"/><rect x="25" y="5" width="5" height="5" fill="rgb(204, 212, 222)"/><rect x="30" y="5" width="5" height="5" fill="rgb(198, 190, 199)"/><rect x="35" y="5" width="5" height="5" fill="rgb(169, 177, 187)"/><rect x="40" y="5" width="5" height="5" fill="rgb(195, 197, 195)"/><rect x="45" y="5" width="5" height="5" fill="rgb(196, 200, 210)"/><rect x="50" y="5" width="5" height="5" fill="rgb(197, 197, 197)"/><rect x="55" y="5" width="5" height="5" fill="rgb(189, 181, 190)"/><rect x="0" y="10" width="5" height="5" fill="rgb(212, 210, 202)"/><rect x="5" y="10" width="5" height="5" fill="rgb(201, 205, 215)"/><rect x="10" y="10" width="5" height="5" fill="rgb(208, 208, 208)"/><rect x="15" y="10" width="5" height="5" fill="rgb(217, 219, 217)"/><rect x="20" y="10" width="5" height="5" fill="rgb(223, 223, 223)"/><rect x="25" y="10" width="5" height="5" fill="rgb(215, 211, 209)"/><rect x="30" y="10" width="5" height="5" fill="rgb(210, 217, 215)"/><rect x="35" y="10" width="5" height="5" fill="rgb(223, 230, 228)"/><rect x="40" y="10" width="5" height="5" fill="rgb(201, 208, 206)"/><rect x="45" y="10" width="5" height="5" fill="rgb(205, 209, 219)"/><rect x="50" y="10" width="5" height="5" fill="rgb(227, 223, 221)"/><rect x="55" y="10" width="5" height="5" fill="rgb(192, 200, 210)"/></svg>
<div class="t" style="left:539.2px;top:304px;font-size:13px;line-height:16px;color:#323232;font-weight:400;font-style:normal;transform:scaleX(1.0026);transform-origin:0 0;">Description</div>
<div style="position:absolute;left:662px;top:302px;width:605px;height:58px;border:1px solid #8c8c8c;background:#fff;"></div>
<svg style="position:absolute;left:1256px;top:349px" width="12" height="12" viewBox="0 0 12 12"><path d="M10 3 L3 10 M10 7 L7 10" stroke="#777" stroke-width="1"/></svg>
<div class="t" style="left:539.2px;top:379px;font-size:13px;line-height:16px;color:#323232;font-weight:400;font-style:normal;transform:scaleX(0.9385);transform-origin:0 0;">Web service URL</div>
<div style="position:absolute;left:662px;top:377px;width:605px;height:21px;border:1px solid #8c8c8c;background:#fff;"></div>
<div class="t" style="left:668.1px;top:382px;font-size:13px;line-height:16px;color:#6e6e6e;font-weight:400;font-style:italic;transform:scaleX(0.9762);transform-origin:0 0;">e.g. httpbin</div>
<div class="t" style="left:539.2px;top:417px;font-size:13px;line-height:16px;color:#323232;font-weight:400;font-style:normal;transform:scaleX(0.9350);transform-origin:0 0;">URL scheme</div>
<div style="position:absolute;left:662px;top:421px;width:11px;height:11px;border:1px solid #555;border-radius:50%;background:#fff;"></div>
<div class="t" style="left:680.8px;top:419px;font-size:12px;line-height:15px;color:#323232;font-weight:400;font-style:normal;transform:scaleX(0.9348);transform-origin:0 0;">HTTP</div>
<div style="position:absolute;left:731px;top:421px;width:11px;height:11px;border:1px solid #555;border-radius:50%;background:#fff;"></div>
<div style="position:absolute;left:734px;top:424px;width:7px;height:7px;border-radius:50%;background:#666;"></div>
<div class="t" style="left:749.4px;top:419px;font-size:12px;line-height:15px;color:#323232;font-weight:400;font-style:normal;transform:scaleX(0.9099);transform-origin:0 0;">HTTPS</div>
<div style="position:absolute;left:806px;top:421px;width:11px;height:11px;border:1px solid #555;border-radius:50%;background:#fff;"></div>
<div class="t" style="left:824.5px;top:419px;font-size:12px;line-height:15px;color:#323232;font-weight:400;font-style:normal;">Both</div>
<div class="t" style="left:539.2px;top:453px;font-size:13px;line-height:16px;color:#323232;font-weight:400;font-style:normal;transform:scaleX(0.9450);transform-origin:0 0;">API URL suffix</div>
<div style="position:absolute;left:662px;top:451px;width:605px;height:21px;border:1px solid #8c8c8c;background:#fff;"></div>
<svg style="position:absolute;left:668px;top:456px" width="60" height="15" viewBox="0 0 60 15"><rect x="0" y="0" width="5" height="5" fill="rgb(234, 230, 228)"/><rect x="20" y="0" width="5" height="5" fill="rgb(231, 227, 225)"/><rect x="30" y="0" width="5" height="5" fill="rgb(229, 229, 229)"/><rect x="45" y="0" width="5" height="5" fill="rgb(229, 236, 234)"/><rect x="0" y="5" width="5" height="5" fill="rgb(198, 200, 198)"/><rect x="5" y="5" width="5" height="5" fill="rgb(216, 208, 217)"/><rect x="10" y="5" width="5" height="5" fill="rgb(209, 211, 209)"/><rect x="15" y="5" width="5" height="5" fill="rgb(194, 202, 212)"/><rect x="20" y="5" width="5" height="5" fill="rgb(209, 213, 223)"/><rect x="25" y="5" width="5" height="5" fill="rgb(202, 206, 216)"/><rect x="30" y="5" width="5" height="5" fill="rgb(193, 195, 193)"/><rect x="35" y="5" width="5" height="5" fill="rgb(201, 209, 219)"/><rect x="40" y="5" width="5" height="5" fill="rgb(199, 203, 213)"/><rect x="45" y="5" width="5" height="5" fill="rgb(219, 215, 213)"/><rect x="50" y="5" width="5" height="5" fill="rgb(194, 196, 194)"/><rect x="55" y="5" width="5" height="5" fill="rgb(203, 210, 208)"/><rect x="0" y="10" width="5" height="5" fill="rgb(243, 235, 244)"/><rect x="5" y="10" width="5" height="5" fill="rgb(220, 216, 214)"/><rect x="10" y="10" width="5" height="5" fill="rgb(236, 243, 241)"/><rect x="15" y="10" width="5" height="5" fill="rgb(225, 217, 226)"/><rect x="20" y="10" width="5" height="5" fill="rgb(225, 227, 225)"/><rect x="25" y="10" width="5" height="5" fill="rgb(237, 239, 237)"/><rect x="30" y="10" width="5" height="5" fill="rgb(230, 234, 244)"/><rect x="35" y="10" width="5" height="5" fill="rgb(241, 237, 235)"/><rect x="40" y="10" width="5" height="5" fill="rgb(221, 221, 221)"/><rect x="45" y="10" width="5" height="5" fill="rgb(233, 233, 233)"/><rect x="50" y="10" width="5" height="5" fill="rgb(240, 242, 240)"/><rect x="55" y="10" width="5" height="5" fill="rgb(215, 219, 229)"/></svg>
<div class="t" style="left:662.8px;top:491px;font-size:13px;line-height:16px;color:#323232;font-weight:400;font-style:normal;transform:scaleX(0.8776);transform-origin:0 0;">Base URL</div>
<div style="position:absolute;left:662px;top:511px;width:605px;height:19px;border:1px solid #b0b0b0;background:#efefef;"></div>
<svg style="position:absolute;left:669px;top:514px" width="370" height="15" viewBox="0 0 370 15"><rect x="0" y="0" width="5" height="5" fill="rgb(235, 231, 229)"/><rect x="5" y="0" width="5" height="5" fill="rgb(215, 223, 233)"/><rect x="40" y="0" width="5" height="5" fill="rgb(224, 226, 224)"/><rect x="50" y="0" width="5" height="5" fill="rgb(225, 229, 239)"/><rect x="55" y="0" width="5" height="5" fill="rgb(217, 221, 231)"/><rect x="60" y="0" width="5" height="5" fill="rgb(223, 221, 213)"/><rect x="70" y="0" width="5" height="5" fill="rgb(227, 223, 221)"/><rect x="100" y="0" width="5" height="5" fill="rgb(220, 222, 220)"/><rect x="105" y="0" width="5" height="5" fill="rgb(214, 221, 219)"/><rect x="115" y="0" width="5" height="5" fill="rgb(233, 229, 227)"/><rect x="125" y="0" width="5" height="5" fill="rgb(229, 227, 219)"/><rect x="130" y="0" width="5" height="5" fill="rgb(209, 217, 227)"/><rect x="135" y="0" width="5" height="5" fill="rgb(209, 213, 223)"/><rect x="145" y="0" width="5" height="5" fill="rgb(237, 235, 227)"/><rect x="160" y="0" width="5" height="5" fill="rgb(223, 230, 228)"/><rect x="185" y="0" width="5" height="5" fill="rgb(231, 227, 225)"/><rect x="215" y="0" width="5" height="5" fill="rgb(229, 229, 229)"/><rect x="235" y="0" width="5" height="5" fill="rgb(222, 229, 227)"/><rect x="240" y="0" width="5" height="5" fill="rgb(228, 224, 222)"/><rect x="245" y="0" width="5" height="5" fill="rgb(228, 235, 233)"/><rect x="255" y="0" width="5" height="5" fill="rgb(218, 218, 218)"/><rect x="260" y="0" width="5" height="5" fill="rgb(215, 215, 215)"/><rect x="270" y="0" width="5" height="5" fill="rgb(218, 226, 236)"/><rect x="275" y="0" width="5" height="5" fill="rgb(223, 219, 217)"/><rect x="280" y="0" width="5" height="5" fill="rgb(215, 223, 233)"/><rect x="285" y="0" width="5" height="5" fill="rgb(223, 225, 223)"/><rect x="290" y="0" width="5" height="5" fill="rgb(226, 226, 226)"/><rect x="365" y="0" width="5" height="5" fill="rgb(224, 231, 229)"/><rect x="0" y="5" width="5" height="5" fill="rgb(167, 175, 185)"/><rect x="5" y="5" width="5" height="5" fill="rgb(182, 178, 176)"/><rect x="10" y="5" width="5" height="5" fill="rgb(183, 179, 177)"/><rect x="15" y="5" width="5" height="5" fill="rgb(192, 196, 206)"/><rect x="20" y="5" width="5" height="5" fill="rgb(194, 194, 194)"/><rect x="25" y="5" width="5" height="5" fill="rgb(188, 190, 188)"/><rect x="30" y="5" width="5" height="5" fill="rgb(190, 194, 204)"/><rect x="35" y="5" width="5" height="5" fill="rgb(169, 173, 183)"/><rect x="40" y="5" width="5" height="5" fill="rgb(175, 179, 189)"/><rect x="45" y="5" width="5" height="5" fill="rgb(186, 188, 186)"/><rect x="50" y="5" width="5" height="5" fill="rgb(208, 208, 208)"/><rect x="55" y="5" width="5" height="5" fill="rgb(191, 199, 209)"/><rect x="60" y="5" width="5" height="5" fill="rgb(196, 194, 186)"/><rect x="65" y="5" width="5" height="5" fill="rgb(179, 177, 169)"/><rect x="70" y="5" width="5" height="5" fill="rgb(179, 171, 180)"/><rect x="75" y="5" width="5" height="5" fill="rgb(177, 177, 177)"/><rect x="80" y="5" width="5" height="5" fill="rgb(186, 184, 176)"/><rect x="85" y="5" width="5" height="5" fill="rgb(205, 213, 223)"/><rect x="90" y="5" width="5" height="5" fill="rgb(188, 192, 202)"/><rect x="95" y="5" width="5" height="5" fill="rgb(194, 201, 199)"/><rect x="100" y="5" width="5" height="5" fill="rgb(201, 201, 201)"/><rect x="105" y="5" width="5" height="5" fill="rgb(191, 187, 185)"/><rect x="110" y="5" width="5" height="5" fill="rgb(207, 207, 207)"/><rect x="115" y="5" width="5" height="5" fill="rgb(224, 220, 218)"/><rect x="120" y="5" width="5" height="5" fill="rgb(172, 174, 172)"/><rect x="125" y="5" width="5" height="5" fill="rgb(182, 174, 183)"/><rect x="130" y="5" width="5" height="5" fill="rgb(190, 192, 190)"/><rect x="135" y="5" width="5" height="5" fill="rgb(191, 191, 191)"/><rect x="140" y="5" width="5" height="5" fill="rgb(180, 188, 198)"/><rect x="145" y="5" width="5" height="5" fill="rgb(199, 206, 204)"/><rect x="150" y="5" width="5" height="5" fill="rgb(217, 215, 207)"/><rect x="155" y="5" width="5" height="5" fill="rgb(196, 188, 197)"/><rect x="160" y="5" width="5" height="5" fill="rgb(189, 197, 207)"/><rect x="165" y="5" width="5" height="5" fill="rgb(200, 196, 194)"/><rect x="170" y="5" width="5" height="5" fill="rgb(190, 197, 195)"/><rect x="175" y="5" width="5" height="5" fill="rgb(228, 226, 218)"/><rect x="180" y="5" width="5" height="5" fill="rgb(226, 222, 220)"/><rect x="185" y="5" width="5" height="5" fill="rgb(178, 174, 172)"/><rect x="190" y="5" width="5" height="5" fill="rgb(199, 199, 199)"/><rect x="195" y="5" width="5" height="5" fill="rgb(205, 213, 223)"/><rect x="200" y="5" width="5" height="5" fill="rgb(193, 200, 198)"/><rect x="205" y="5" width="5" height="5" fill="rgb(223, 221, 213)"/><rect x="210" y="5" width="5" height="5" fill="rgb(209, 213, 223)"/><rect x="215" y="5" width="5" height="5" fill="rgb(203, 199, 197)"/><rect x="220" y="5" width="5" height="5" fill="rgb(210, 212, 210)"/><rect x="225" y="5" width="5" height="5" fill="rgb(220, 222, 220)"/><rect x="230" y="5" width="5" height="5" fill="rgb(196, 204, 214)"/><rect x="235" y="5" width="5" height="5" fill="rgb(205, 212, 210)"/><rect x="240" y="5" width="5" height="5" fill="rgb(214, 222, 232)"/><rect x="245" y="5" width="5" height="5" fill="rgb(189, 189, 189)"/><rect x="250" y="5" width="5" height="5" fill="rgb(203, 203, 203)"/><rect x="255" y="5" width="5" height="5" fill="rgb(203, 205, 203)"/><rect x="260" y="5" width="5" height="5" fill="rgb(187, 191, 201)"/><rect x="265" y="5" width="5" height="5" fill="rgb(175, 171, 169)"/><rect x="270" y="5" width="5" height="5" fill="rgb(168, 172, 182)"/><rect x="275" y="5" width="5" height="5" fill="rgb(176, 184, 194)"/><rect x="280" y="5" width="5" height="5" fill="rgb(203, 210, 208)"/><rect x="285" y="5" width="5" height="5" fill="rgb(223, 225, 223)"/><rect x="290" y="5" width="5" height="5" fill="rgb(187, 189, 187)"/><rect x="295" y="5" width="5" height="5" fill="rgb(208, 200, 209)"/><rect x="300" y="5" width="5" height="5" fill="rgb(164, 172, 182)"/><rect x="305" y="5" width="5" height="5" fill="rgb(181, 185, 195)"/><rect x="310" y="5" width="5" height="5" fill="rgb(225, 221, 219)"/><rect x="315" y="5" width="5" height="5" fill="rgb(221, 217, 215)"/><rect x="320" y="5" width="5" height="5" fill="rgb(184, 191, 189)"/><rect x="325" y="5" width="5" height="5" fill="rgb(225, 223, 215)"/><rect x="330" y="5" width="5" height="5" fill="rgb(225, 223, 215)"/><rect x="335" y="5" width="5" height="5" fill="rgb(208, 204, 202)"/><rect x="340" y="5" width="5" height="5" fill="rgb(208, 204, 202)"/><rect x="345" y="5" width="5" height="5" fill="rgb(223, 215, 224)"/><rect x="350" y="5" width="5" height="5" fill="rgb(169, 173, 183)"/><rect x="355" y="5" width="5" height="5" fill="rgb(206, 213, 211)"/><rect x="360" y="5" width="5" height="5" fill="rgb(181, 179, 171)"/><rect x="365" y="5" width="5" height="5" fill="rgb(211, 207, 205)"/><rect x="0" y="10" width="5" height="5" fill="rgb(190, 194, 204)"/><rect x="5" y="10" width="5" height="5" fill="rgb(222, 224, 222)"/><rect x="10" y="10" width="5" height="5" fill="rgb(196, 198, 196)"/><rect x="15" y="10" width="5" height="5" fill="rgb(224, 226, 224)"/><rect x="20" y="10" width="5" height="5" fill="rgb(196, 203, 201)"/><rect x="25" y="10" width="5" height="5" fill="rgb(198, 200, 198)"/><rect x="30" y="10" width="5" height="5" fill="rgb(220, 222, 220)"/><rect x="35" y="10" width="5" height="5" fill="rgb(198, 190, 199)"/><rect x="40" y="10" width="5" height="5" fill="rgb(230, 228, 220)"/><rect x="45" y="10" width="5" height="5" fill="rgb(192, 200, 210)"/><rect x="50" y="10" width="5" height="5" fill="rgb(207, 205, 197)"/><rect x="55" y="10" width="5" height="5" fill="rgb(207, 214, 212)"/><rect x="60" y="10" width="5" height="5" fill="rgb(230, 222, 231)"/><rect x="65" y="10" width="5" height="5" fill="rgb(230, 222, 231)"/><rect x="70" y="10" width="5" height="5" fill="rgb(197, 205, 215)"/><rect x="75" y="10" width="5" height="5" fill="rgb(237, 235, 227)"/><rect x="80" y="10" width="5" height="5" fill="rgb(222, 222, 222)"/><rect x="85" y="10" width="5" height="5" fill="rgb(208, 200, 209)"/><rect x="90" y="10" width="5" height="5" fill="rgb(208, 204, 202)"/><rect x="95" y="10" width="5" height="5" fill="rgb(224, 232, 242)"/><rect x="100" y="10" width="5" height="5" fill="rgb(211, 207, 205)"/><rect x="105" y="10" width="5" height="5" fill="rgb(202, 198, 196)"/><rect x="110" y="10" width="5" height="5" fill="rgb(201, 205, 215)"/><rect x="115" y="10" width="5" height="5" fill="rgb(208, 216, 226)"/><rect x="120" y="10" width="5" height="5" fill="rgb(222, 218, 216)"/><rect x="125" y="10" width="5" height="5" fill="rgb(215, 219, 229)"/><rect x="130" y="10" width="5" height="5" fill="rgb(223, 231, 241)"/><rect x="135" y="10" width="5" height="5" fill="rgb(194, 202, 212)"/><rect x="140" y="10" width="5" height="5" fill="rgb(226, 218, 227)"/><rect x="145" y="10" width="5" height="5" fill="rgb(226, 228, 226)"/><rect x="150" y="10" width="5" height="5" fill="rgb(202, 210, 220)"/><rect x="155" y="10" width="5" height="5" fill="rgb(230, 228, 220)"/><rect x="160" y="10" width="5" height="5" fill="rgb(192, 194, 192)"/><rect x="165" y="10" width="5" height="5" fill="rgb(204, 200, 198)"/><rect x="170" y="10" width="5" height="5" fill="rgb(214, 221, 219)"/><rect x="175" y="10" width="5" height="5" fill="rgb(219, 211, 220)"/><rect x="180" y="10" width="5" height="5" fill="rgb(230, 226, 224)"/><rect x="185" y="10" width="5" height="5" fill="rgb(186, 194, 204)"/><rect x="190" y="10" width="5" height="5" fill="rgb(232, 228, 226)"/><rect x="195" y="10" width="5" height="5" fill="rgb(219, 226, 224)"/><rect x="200" y="10" width="5" height="5" fill="rgb(212, 219, 217)"/><rect x="205" y="10" width="5" height="5" fill="rgb(210, 217, 215)"/><rect x="210" y="10" width="5" height="5" fill="rgb(211, 203, 212)"/><rect x="215" y="10" width="5" height="5" fill="rgb(201, 201, 201)"/><rect x="220" y="10" width="5" height="5" fill="rgb(214, 212, 204)"/><rect x="225" y="10" width="5" height="5" fill="rgb(227, 234, 232)"/><rect x="230" y="10" width="5" height="5" fill="rgb(200, 207, 205)"/><rect x="235" y="10" width="5" height="5" fill="rgb(187, 191, 201)"/><rect x="240" y="10" width="5" height="5" fill="rgb(205, 201, 199)"/><rect x="245" y="10" width="5" height="5" fill="rgb(206, 198, 207)"/><rect x="250" y="10" width="5" height="5" fill="rgb(202, 206, 216)"/><rect x="255" y="10" width="5" height="5" fill="rgb(194, 196, 194)"/><rect x="260" y="10" width="5" height="5" fill="rgb(226, 222, 220)"/><rect x="265" y="10" width="5" height="5" fill="rgb(197, 195, 187)"/><rect x="270" y="10" width="5" height="5" fill="rgb(225, 225, 225)"/><rect x="275" y="10" width="5" height="5" fill="rgb(230, 222, 231)"/><rect x="280" y="10" width="5" height="5" fill="rgb(195, 197, 195)"/><rect x="285" y="10" width="5" height="5" fill="rgb(233, 225, 234)"/><rect x="290" y="10" width="5" height="5" fill="rgb(229, 229, 229)"/><rect x="295" y="10" width="5" height="5" fill="rgb(220, 220, 220)"/><rect x="300" y="10" width="5" height="5" fill="rgb(193, 193, 193)"/><rect x="305" y="10" width="5" height="5" fill="rgb(221, 217, 215)"/><rect x="310" y="10" width="5" height="5" fill="rgb(184, 188, 198)"/><rect x="315" y="10" width="5" height="5" fill="rgb(210, 210, 210)"/><rect x="320" y="10" width="5" height="5" fill="rgb(198, 205, 203)"/><rect x="325" y="10" width="5" height="5" fill="rgb(204, 208, 218)"/><rect x="330" y="10" width="5" height="5" fill="rgb(203, 210, 208)"/><rect x="335" y="10" width="5" height="5" fill="rgb(225, 221, 219)"/><rect x="340" y="10" width="5" height="5" fill="rgb(225, 232, 230)"/><rect x="345" y="10" width="5" height="5" fill="rgb(214, 218, 228)"/><rect x="350" y="10" width="5" height="5" fill="rgb(216, 218, 216)"/><rect x="355" y="10" width="5" height="5" fill="rgb(206, 198, 207)"/><rect x="360" y="10" width="5" height="5" fill="rgb(213, 205, 214)"/><rect x="365" y="10" width="5" height="5" fill="rgb(211, 211, 211)"/></svg>
<div class="t" style="left:539.2px;top:548px;font-size:13px;line-height:16px;color:#323232;font-weight:400;font-style:normal;transform:scaleX(0.8919);transform-origin:0 0;">Tags</div>
<div style="position:absolute;left:662px;top:546px;width:605px;height:21px;border:1px solid #8c8c8c;background:#fff;"></div>
<div class="t" style="left:665px;top:550px;font-size:13px;line-height:16px;color:#6e6e6e;font-weight:400;font-style:italic;transform:scaleX(0.9408);transform-origin:0 0;">e.g. Booking</div>
<div class="t" style="left:539.2px;top:586px;font-size:13px;line-height:16px;color:#323232;font-weight:400;font-style:normal;transform:scaleX(0.9686);transform-origin:0 0;">Products</div>
<div style="position:absolute;left:662px;top:584px;width:605px;height:20px;border:1px solid #8c8c8c;background:#fff;"></div>
<div style="position:absolute;left:664px;top:586px;width:45px;height:18px;background:#575757;"></div>
<div class="t" style="left:669.7px;top:588px;font-size:13px;line-height:16px;color:#ffffff;font-weight:400;font-style:normal;transform:scaleX(0.9227);transform-origin:0 0;">Test</div>
<svg style="position:absolute;left:694px;top:591px" width="12" height="12" viewBox="0 0 12 12"><path d="M2.5 2.5 L8.5 8.5 M8.5 2.5 L2.5 8.5" stroke="#fff" stroke-width="1.5"/></svg>
<div class="t" style="left:539.2px;top:623px;font-size:13px;line-height:16px;color:#323232;font-weight:400;font-style:normal;transform:scaleX(0.9306);transform-origin:0 0;">Gateways</div>
<div style="position:absolute;left:662px;top:621px;width:605px;height:21px;border:1px solid #8c8c8c;background:#fff;"></div>
<div style="position:absolute;left:664px;top:623px;width:77px;height:19px;background:#575757;"></div>
<div class="t" style="left:669.7px;top:625px;font-size:13px;line-height:16px;color:#ffffff;font-weight:400;font-style:normal;transform:scaleX(0.9775);transform-origin:0 0;">Managed</div>
<svg style="position:absolute;left:726px;top:628px" width="12" height="12" viewBox="0 0 12 12"><path d="M2.5 2.5 L8.5 8.5 M8.5 2.5 L2.5 8.5" stroke="#fff" stroke-width="1.5"/></svg>
<div class="t" style="left:519.7px;top:675px;font-size:23px;line-height:29px;color:#323130;font-weight:400;font-style:normal;transform:scaleX(0.9820);transform-origin:0 0;">Subscription</div>
<div class="t" style="left:539.3px;top:722px;font-size:13px;line-height:16px;color:#323232;font-weight:400;font-style:normal;transform:scaleX(0.9882);transform-origin:0 0;">Subscription</div>
<div class="t" style="left:539.3px;top:741px;font-size:13px;line-height:16px;color:#323232;font-weight:400;font-style:normal;transform:scaleX(1.0062);transform-origin:0 0;">required</div>
<div style="position:absolute;left:662px;top:724px;width:13px;height:13px;background:#6a6a6a;border-radius:2px;"></div>
<svg style="position:absolute;left:662px;top:724px" width="13" height="13" viewBox="0 0 13 13"><path d="M3.2 6.6 L5.5 9.1 L10 3.9" fill="none" stroke="#fff" stroke-width="1.9"/></svg>
<div style="position:absolute;left:520px;top:714px;width:171px;height:51px;border:2px solid #f40000;box-shadow:inset 2px 3px 4px rgba(0,0,0,0.22), 3px 3px 4px rgba(0,0,0,0.35);"></div>
<div class="t" style="left:539.2px;top:777px;font-size:13px;line-height:16px;color:#323232;font-weight:400;font-style:normal;transform:scaleX(0.9672);transform-origin:0 0;">Header name</div>
<div style="position:absolute;left:662px;top:775px;width:605px;height:21px;border:1px solid #8c8c8c;background:#fff;"></div>
<div class="t" style="left:668.4px;top:780px;font-size:13px;line-height:16px;color:#323232;font-weight:400;font-style:normal;transform:scaleX(1.0038);transform-origin:0 0;">Ocp-Apim-Subscription-Key</div>
<div class="t" style="left:539.3px;top:815px;font-size:13px;line-height:16px;color:#323232;font-weight:400;font-style:normal;transform:scaleX(0.9871);transform-origin:0 0;">Query parameter</div>
<div class="t" style="left:539.3px;top:834px;font-size:13px;line-height:16px;color:#323232;font-weight:400;font-style:normal;">name</div>
<div style="position:absolute;left:662px;top:813px;width:605px;height:21px;border:1px solid #8c8c8c;background:#fff;"></div>
<div class="t" style="left:668.4px;top:818px;font-size:13px;line-height:16px;color:#323232;font-weight:400;font-style:normal;transform:scaleX(1.0060);transform-origin:0 0;">subscription-key</div>
</body></html>
